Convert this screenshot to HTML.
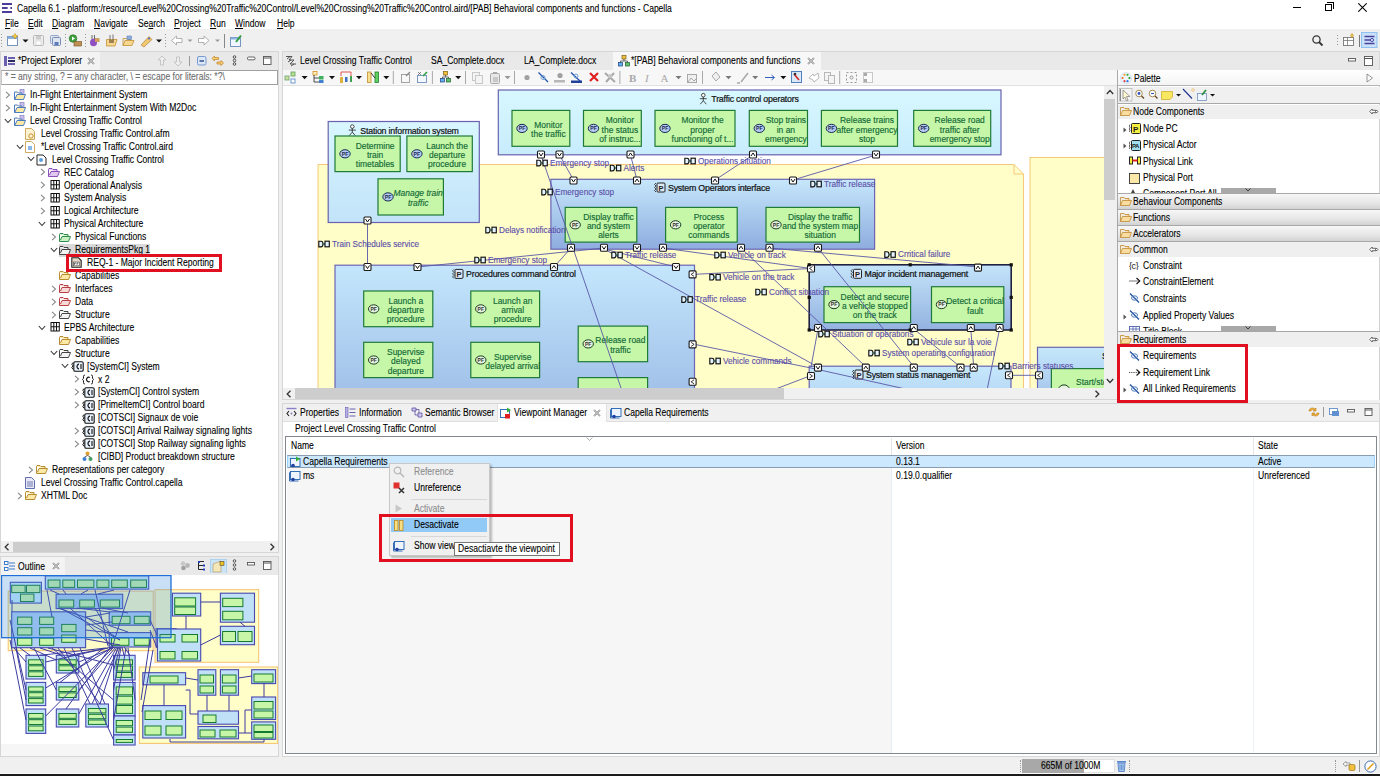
<!DOCTYPE html>
<html><head><meta charset="utf-8"><title>Capella</title>
<style>
*{box-sizing:border-box;margin:0;padding:0}
html,body{width:1380px;height:776px;overflow:hidden;background:#f0f0f0;font-family:"Liberation Sans",sans-serif;font-size:10px;letter-spacing:0px;color:#000}
.a{position:absolute}
.t{position:absolute;white-space:nowrap;line-height:12px;-webkit-text-stroke:0.1px currentColor;transform-origin:0 0;transform:scaleX(0.855)}
.ico{position:absolute}
</style></head><body>
<!-- title bar -->
<div class="a" style="left:0;top:0;width:1380px;height:29px;background:#fff"></div>
<svg class="a" style="left:2px;top:3px" width="12" height="10" viewBox="0 0 12 10"><rect x="0" y="0" width="10" height="2" fill="#4a3f9a"/><rect x="0" y="4" width="10" height="2" fill="#4a3f9a"/><rect x="0" y="8" width="10" height="2" fill="#4a3f9a"/><circle cx="7" cy="5" r="1.5" fill="#fff"/></svg>
<div class="t" style="left:17px;top:3.3px;letter-spacing:-0.03px">Capella 6.1 - platform:/resource/Level%20Crossing%20Traffic%20Control/Level%20Crossing%20Traffic%20Control.aird/[PAB] Behavioral components and functions - Capella</div>
<!-- window controls -->
<div class="a" style="left:1292.5px;top:7px;width:8.5px;height:1px;background:#000"></div>
<div class="a" style="left:1325px;top:4px;width:7px;height:7px;border:1px solid #000;background:#fff"></div>
<div class="a" style="left:1327px;top:2px;width:7px;height:7px;border-top:1px solid #000;border-right:1px solid #000"></div>
<svg class="a" style="left:1357.5px;top:3px" width="9" height="9" viewBox="0 0 9 9"><path d="M0.3 0.3L8.7 8.7M8.7 0.3L0.3 8.7" stroke="#000" stroke-width="1.05"/></svg>
<!-- menu -->
<div class="t" style="left:5px;top:18px"><u>F</u>ile</div>
<div class="t" style="left:28px;top:18px"><u>E</u>dit</div>
<div class="t" style="left:52px;top:18px"><u>D</u>iagram</div>
<div class="t" style="left:94px;top:18px"><u>N</u>avigate</div>
<div class="t" style="left:138px;top:18px">Se<u>a</u>rch</div>
<div class="t" style="left:174px;top:18px"><u>P</u>roject</div>
<div class="t" style="left:210px;top:18px"><u>R</u>un</div>
<div class="t" style="left:235px;top:18px"><u>W</u>indow</div>
<div class="t" style="left:277px;top:18px"><u>H</u>elp</div>
<!-- main toolbar -->
<div class="a" style="left:0;top:29px;width:1380px;height:22px;background:#f0f0f0"></div>
<svg class="a" style="left:0;top:29px" width="260" height="22" viewBox="0 29 260 22">
<path d="M1.5 34V48" stroke="#999" stroke-width="1" stroke-dasharray="1 2"/>
<rect x="7.5" y="36.5" width="10" height="9" fill="#fff" stroke="#6a8ab8" stroke-width="0.9"/><rect x="7.5" y="36.5" width="10" height="2.5" fill="#8ab0e0"/><path d="M15 33.5L16 35.5L18 36L16 37L15 39L14 37L12 36L14 35.5Z" fill="#f8d040" stroke="#b08010" stroke-width="0.5"/>
<path d="M22.5 39.5H28.5L25.5 42.5Z" fill="#111"/>
<rect x="33.5" y="35.5" width="10" height="10" rx="1" fill="#eee" stroke="#b8b8b8"/><rect x="36" y="36" width="5" height="3.5" fill="#ccc"/><rect x="36" y="41" width="5" height="4" fill="#fff" stroke="#c8c8c8" stroke-width="0.5"/>
<rect x="50.5" y="35.5" width="8" height="8" rx="1" fill="#dde4f0" stroke="#98a8c8"/><rect x="52.5" y="37.5" width="8" height="8" rx="1" fill="#dde4f0" stroke="#7890b8"/><rect x="54.5" y="42" width="4" height="3" fill="#5a7ab8"/>
<path d="M65.5 34V48" stroke="#999" stroke-width="1" stroke-dasharray="1 2"/>
<circle cx="73" cy="38.5" r="3.8" fill="#40a040" stroke="#207020" stroke-width="0.6"/><path d="M72 36.5L75 38.5L72 40.5Z" fill="#fff"/><rect x="74" y="41.5" width="7.5" height="4.5" fill="#c09050" stroke="#705020" stroke-width="0.6"/>
<path d="M85.5 34V48" stroke="#999" stroke-width="1" stroke-dasharray="1 2"/>
<ellipse cx="93.5" cy="42.5" rx="3.5" ry="3.8" fill="#9050c0"/><path d="M92 35V39M94.5 35V39" stroke="#444" stroke-width="0.8"/><rect x="95" y="38" width="4.5" height="4" fill="#d0a060"/>
<path d="M106.5 39.5H117L115 46H106.5Z" fill="#f8d890" stroke="#c09030" stroke-width="0.8"/><path d="M110 35V40M113 34.5V40" stroke="#555" stroke-width="0.8"/><rect x="109" y="40" width="5" height="3" fill="#a08050"/>
<path d="M123 38.5V45.5H132L134 40.5H125L123 45.5M123 38.5H126.5L127.5 39.5H131V40.5" fill="#f8d890" stroke="#c09030" stroke-width="0.8"/><rect x="127" y="36" width="4.5" height="3.5" fill="#8ab0e0" stroke="#5070b0" stroke-width="0.5"/>
<path d="M141 45L149 36.5L152 39.5L144 47Z" fill="#f0c870" stroke="#b08040" stroke-width="0.7"/><circle cx="149" cy="38.5" r="1" fill="#4060c0"/>
<path d="M156 39.5H162L159 42.5Z" fill="#111"/>
<path d="M165.5 34V48" stroke="#999" stroke-width="1" stroke-dasharray="1 2"/>
<path d="M171.5 40.5L176.5 36V38.5H182V42.5H176.5V45Z" fill="#fff" stroke="#a8a8a8" stroke-width="0.9"/>
<path d="M187.5 39.5H192.5L190 42Z" fill="#999"/>
<path d="M209 40.5L204 36V38.5H198.5V42.5H204V45Z" fill="#fff" stroke="#a8a8a8" stroke-width="0.9"/>
<path d="M215 39.5H220L217.5 42Z" fill="#999"/>
<path d="M224.5 34V48" stroke="#888" stroke-width="1"/>
<rect x="230.5" y="37.5" width="10" height="9" fill="#f0f6ff" stroke="#6a8ab8" stroke-width="0.9"/><rect x="230.5" y="37.5" width="10" height="2" fill="#8ab0e0"/><path d="M236 42L241 35.5" stroke="#30a040" stroke-width="2"/>
</svg>
<svg class="a" style="left:1305px;top:29px" width="75" height="22" viewBox="1305 29 75 22">
<circle cx="1316.5" cy="39.5" r="3.6" fill="none" stroke="#333" stroke-width="1.3"/><path d="M1319 42L1322.5 45.5" stroke="#333" stroke-width="1.8"/>
<path d="M1337.5 35V47" stroke="#999" stroke-width="1" stroke-dasharray="1 2"/>
<rect x="1343.5" y="37.5" width="10" height="8" fill="#fff" stroke="#777" stroke-width="0.9"/><path d="M1343.5 40.5H1353.5M1347.5 37.5V45.5" stroke="#777" stroke-width="0.8"/><path d="M1352 33.5L1353.5 35.5L1352 37.5L1350.5 35.5Z" fill="#f0c040" stroke="#b08010" stroke-width="0.5"/>
<path d="M1359.5 35V47" stroke="#777" stroke-width="1"/>
<rect x="1361.5" y="32.5" width="15.5" height="15" fill="#c8e0f8" stroke="#90c0f0" stroke-width="1"/>
<path d="M1364.5 36.5H1374.5M1364.5 40H1370.5M1364.5 43.5H1374.5" stroke="#4a40a0" stroke-width="1.6"/><circle cx="1372" cy="40" r="1.6" fill="none" stroke="#4a40a0" stroke-width="0.9"/>
</svg>
<!-- project explorer -->
<div class="a" style="left:0;top:51px;width:279px;height:502px;background:#fff;border:1px solid #d6d6d6"></div>
<div class="a" style="left:1px;top:52px;width:277px;height:18px;background:#e9e9e9"></div>
<div class="a" style="left:1px;top:52px;width:99px;height:18px;background:#f3f3f3"></div>
<svg class="a" style="left:4px;top:56px" width="11" height="10" viewBox="0 0 11 10"><rect x="0" y="0" width="3" height="10" fill="#6a60b0"/><rect x="4" y="1" width="7" height="2" fill="#6a60b0"/><rect x="4" y="4" width="7" height="2" fill="#2a2a60"/><rect x="4" y="7" width="7" height="2" fill="#6a60b0"/></svg>
<div class="t" style="left:18px;top:55px">*Project Explorer</div>
<svg class="a" style="left:87px;top:57px" width="8" height="8" viewBox="0 0 8 8"><path d="M1 1L7 7M7 1L1 7" stroke="#777" stroke-width="1.6"/><path d="M1 1L7 7M7 1L1 7" stroke="#fff" stroke-width="0.5"/></svg>
<svg class="a" style="left:157px;top:55px" width="120" height="12" viewBox="0 0 120 12"><path d="M5 1L1 5H3.5V10H6.5V5H9Z" fill="#eee" stroke="#bbb" stroke-width="0.8"/><path d="M21 11L17 7H19.5V2H22.5V7H25Z" fill="#eee" stroke="#bbb" stroke-width="0.8"/><path d="M32.5 1V11" stroke="#999" stroke-width="1"/><rect x="40.5" y="1.5" width="8.5" height="8.5" rx="1.5" fill="#dce8f8" stroke="#6a90d0" stroke-width="0.9"/><path d="M42.5 6H47" stroke="#1a3a80" stroke-width="1.3"/><path d="M55 3.5L57.5 1V2.5H61.5V4.5H57.5V6Z" fill="#f8d070" stroke="#c08020" stroke-width="0.7"/><path d="M66.5 8L64 5.5V7H60V9H64V10.5Z" fill="#f8d070" stroke="#c08020" stroke-width="0.7"/><circle cx="77.5" cy="2" r="1.3" fill="none" stroke="#333" stroke-width="0.8"/><circle cx="77.5" cy="5.5" r="1.3" fill="none" stroke="#333" stroke-width="0.8"/><circle cx="77.5" cy="9" r="1.3" fill="none" stroke="#333" stroke-width="0.8"/><rect x="90.5" y="2" width="7.5" height="2.8" rx="1" fill="#fff" stroke="#555" stroke-width="0.9"/><rect x="106.5" y="1.5" width="7.5" height="8" fill="#fff" stroke="#555" stroke-width="0.9"/><path d="M106.5 3H114" stroke="#555"/></svg>
<div class="a" style="left:1px;top:69.5px;width:277px;height:15.5px;background:#fff;border:1px solid #a0a0a0;border-left-color:#c8c8c8"></div>
<div class="t" style="left:4.5px;top:71.3px;color:#6d6d6d">* = any string, ? = any character, \ = escape for literals: *?\</div>
<svg class="a" style="left:5.4px;top:90.8px" width="6" height="8" viewBox="0 0 6 8"><path d="M1 0.8L4.5 4L1 7.2" fill="none" stroke="#8a8a8a" stroke-width="1.1"/></svg>
<div class="ico" style="left:13.7px;top:89.3px;line-height:0"><svg width="12" height="11" viewBox="0 0 12 11"><rect x="6" y="0.5" width="4" height="6" fill="#c8c0ee" stroke="#8a7fc0" stroke-width="0.7"/><path d="M0.5 3 L0.5 10.5 L9.5 10.5 L11.5 5.5 L3 5.5 L1 10 M0.5 3 L3.5 3 L4.5 4 L8 4 L8 5.5" fill="#fde9a6" stroke="#3a6fc0" stroke-width="0.9"/></svg></div>
<div class="t" style="left:29.7px;top:89.0px">In-Flight Entertainment System</div>
<svg class="a" style="left:5.4px;top:103.7px" width="6" height="8" viewBox="0 0 6 8"><path d="M1 0.8L4.5 4L1 7.2" fill="none" stroke="#8a8a8a" stroke-width="1.1"/></svg>
<div class="ico" style="left:13.7px;top:102.2px;line-height:0"><svg width="12" height="11" viewBox="0 0 12 11"><rect x="6" y="0.5" width="4" height="6" fill="#c8c0ee" stroke="#8a7fc0" stroke-width="0.7"/><path d="M0.5 3 L0.5 10.5 L9.5 10.5 L11.5 5.5 L3 5.5 L1 10 M0.5 3 L3.5 3 L4.5 4 L8 4 L8 5.5" fill="#fde9a6" stroke="#3a6fc0" stroke-width="0.9"/></svg></div>
<div class="t" style="left:29.7px;top:101.9px">In-Flight Entertainment System With M2Doc</div>
<svg class="a" style="left:4.2px;top:117.7px" width="8" height="6" viewBox="0 0 8 6"><path d="M0.8 1L4 4.5L7.2 1" fill="none" stroke="#333" stroke-width="1.1"/></svg>
<div class="ico" style="left:13.7px;top:115.2px;line-height:0"><svg width="12" height="11" viewBox="0 0 12 11"><rect x="6" y="0.5" width="4" height="6" fill="#c8c0ee" stroke="#8a7fc0" stroke-width="0.7"/><path d="M0.5 3 L0.5 10.5 L9.5 10.5 L11.5 5.5 L3 5.5 L1 10 M0.5 3 L3.5 3 L4.5 4 L8 4 L8 5.5" fill="#fde9a6" stroke="#3a6fc0" stroke-width="0.9"/></svg></div>
<div class="t" style="left:29.7px;top:114.9px">Level Crossing Traffic Control</div>
<div class="ico" style="left:25.0px;top:128.1px;line-height:0"><svg width="10" height="12" viewBox="0 0 10 12"><path d="M0.5 0.5 L6.5 0.5 L9.5 3.5 L9.5 11.5 L0.5 11.5 Z" fill="#fdf3d0" stroke="#c8a050" stroke-width="0.9"/><circle cx="6" cy="8" r="2.2" fill="none" stroke="#c89030" stroke-width="1"/></svg></div>
<div class="t" style="left:41.0px;top:127.8px">Level Crossing Traffic Control.afm</div>
<svg class="a" style="left:15.5px;top:143.5px" width="8" height="6" viewBox="0 0 8 6"><path d="M0.8 1L4 4.5L7.2 1" fill="none" stroke="#333" stroke-width="1.1"/></svg>
<div class="ico" style="left:25.0px;top:141.0px;line-height:0"><svg width="10" height="12" viewBox="0 0 10 12"><path d="M0.5 0.5 L6.5 0.5 L9.5 3.5 L9.5 11.5 L0.5 11.5 Z" fill="#fff" stroke="#c8a050" stroke-width="0.9"/><rect x="3" y="5" width="4" height="4" fill="#8ab8e8"/></svg></div>
<div class="t" style="left:41.0px;top:140.7px">*Level Crossing Traffic Control.aird</div>
<svg class="a" style="left:26.9px;top:156.4px" width="8" height="6" viewBox="0 0 8 6"><path d="M0.8 1L4 4.5L7.2 1" fill="none" stroke="#333" stroke-width="1.1"/></svg>
<div class="ico" style="left:36.4px;top:153.9px;line-height:0"><svg width="11" height="12" viewBox="0 0 11 12"><path d="M1 1 L7 1 L10 4 L10 11 L1 11 Z" fill="#fff" stroke="#222" stroke-width="1"/><circle cx="5" cy="6" r="2" fill="#5aa0e0"/></svg></div>
<div class="t" style="left:52.4px;top:153.6px">Level Crossing Traffic Control</div>
<svg class="a" style="left:39.5px;top:168.4px" width="6" height="8" viewBox="0 0 6 8"><path d="M1 0.8L4.5 4L1 7.2" fill="none" stroke="#8a8a8a" stroke-width="1.1"/></svg>
<div class="ico" style="left:47.8px;top:166.9px;line-height:0"><svg width="12" height="10" viewBox="0 0 12 10"><path d="M0.5 2.5 L0.5 9.5 L9.5 9.5 L11.5 4.5 L3 4.5 L1.5 8 M0.5 2.5 L1 1.5 L4 1.5 L5 2.5 L9 2.5 L9 4.5" fill="#e0c8f0" stroke="#8040b0" stroke-width="0.9"/></svg></div>
<div class="t" style="left:63.8px;top:166.6px">REC Catalog</div>
<svg class="a" style="left:39.5px;top:181.3px" width="6" height="8" viewBox="0 0 6 8"><path d="M1 0.8L4.5 4L1 7.2" fill="none" stroke="#8a8a8a" stroke-width="1.1"/></svg>
<div class="ico" style="left:47.8px;top:179.8px;line-height:0"><svg width="12" height="10" viewBox="0 0 12 10"><rect x="3" y="0.5" width="8.3" height="8.5" fill="none" stroke="#111" stroke-width="1"/><path d="M5.8 0.5V9M8.5 0.5V9M3 4.75H11.3" stroke="#111" stroke-width="1"/></svg></div>
<div class="t" style="left:63.8px;top:179.5px">Operational Analysis</div>
<svg class="a" style="left:39.5px;top:194.2px" width="6" height="8" viewBox="0 0 6 8"><path d="M1 0.8L4.5 4L1 7.2" fill="none" stroke="#8a8a8a" stroke-width="1.1"/></svg>
<div class="ico" style="left:47.8px;top:192.7px;line-height:0"><svg width="12" height="10" viewBox="0 0 12 10"><rect x="3" y="0.5" width="8.3" height="8.5" fill="none" stroke="#111" stroke-width="1"/><path d="M5.8 0.5V9M8.5 0.5V9M3 4.75H11.3" stroke="#111" stroke-width="1"/></svg></div>
<div class="t" style="left:63.8px;top:192.4px">System Analysis</div>
<svg class="a" style="left:39.5px;top:207.2px" width="6" height="8" viewBox="0 0 6 8"><path d="M1 0.8L4.5 4L1 7.2" fill="none" stroke="#8a8a8a" stroke-width="1.1"/></svg>
<div class="ico" style="left:47.8px;top:205.7px;line-height:0"><svg width="12" height="10" viewBox="0 0 12 10"><rect x="3" y="0.5" width="8.3" height="8.5" fill="none" stroke="#111" stroke-width="1"/><path d="M5.8 0.5V9M8.5 0.5V9M3 4.75H11.3" stroke="#111" stroke-width="1"/></svg></div>
<div class="t" style="left:63.8px;top:205.4px">Logical Architecture</div>
<svg class="a" style="left:38.3px;top:221.1px" width="8" height="6" viewBox="0 0 8 6"><path d="M0.8 1L4 4.5L7.2 1" fill="none" stroke="#333" stroke-width="1.1"/></svg>
<div class="ico" style="left:47.8px;top:218.6px;line-height:0"><svg width="12" height="10" viewBox="0 0 12 10"><rect x="3" y="0.5" width="8.3" height="8.5" fill="none" stroke="#111" stroke-width="1"/><path d="M5.8 0.5V9M8.5 0.5V9M3 4.75H11.3" stroke="#111" stroke-width="1"/></svg></div>
<div class="t" style="left:63.8px;top:218.3px">Physical Architecture</div>
<svg class="a" style="left:51.0px;top:233.0px" width="6" height="8" viewBox="0 0 6 8"><path d="M1 0.8L4.5 4L1 7.2" fill="none" stroke="#8a8a8a" stroke-width="1.1"/></svg>
<div class="ico" style="left:59.3px;top:231.5px;line-height:0"><svg width="12" height="10" viewBox="0 0 12 10"><path d="M0.5 2.5 L0.5 9.5 L9.5 9.5 L11.5 4.5 L3 4.5 L1.5 8 M0.5 2.5 L1 1.5 L4 1.5 L5 2.5 L9 2.5 L9 4.5" fill="#c8f0c0" stroke="#208040" stroke-width="0.9"/></svg></div>
<div class="t" style="left:75.3px;top:231.2px">Physical Functions</div>
<div class="a" style="left:59px;top:243.5px;width:91px;height:13px;background:#d9d9d9"></div>
<svg class="a" style="left:49.8px;top:247.0px" width="8" height="6" viewBox="0 0 8 6"><path d="M0.8 1L4 4.5L7.2 1" fill="none" stroke="#333" stroke-width="1.1"/></svg>
<div class="ico" style="left:59.3px;top:244.5px;line-height:0"><svg width="12" height="10" viewBox="0 0 12 10"><path d="M0.5 2.5 L0.5 9.5 L9.5 9.5 L11.5 4.5 L3 4.5 L1.5 8 M0.5 2.5 L1 1.5 L4 1.5 L5 2.5 L9 2.5 L9 4.5" fill="#f4f4f4" stroke="#303030" stroke-width="0.9"/></svg></div>
<div class="t" style="left:75.3px;top:244.2px">RequirementsPkg 1</div>
<div class="ico" style="left:70.9px;top:257.4px;line-height:0"><svg width="11" height="11" viewBox="0 0 11 11"><path d="M0.8 0.8H7.5L10.2 3.5V10.2H0.8Z" fill="#e8d8c8" stroke="#222" stroke-width="1.1"/><rect x="2.5" y="5" width="6" height="3.8" fill="#fff" stroke="#444" stroke-width="0.6"/><path d="M3.5 7.8V6H5M6 7.8V6H7.5" stroke="#222" stroke-width="0.7" fill="none"/></svg></div>
<div class="t" style="left:86.9px;top:257.1px">REQ-1 - Major Incident Reporting</div>
<div class="ico" style="left:59.3px;top:270.3px;line-height:0"><svg width="12" height="10" viewBox="0 0 12 10"><path d="M0.5 2.5 L0.5 9.5 L9.5 9.5 L11.5 4.5 L3 4.5 L1.5 8 M0.5 2.5 L1 1.5 L4 1.5 L5 2.5 L9 2.5 L9 4.5" fill="#fde9a6" stroke="#b08020" stroke-width="0.9"/></svg></div>
<div class="t" style="left:75.3px;top:270.0px">Capabilities</div>
<svg class="a" style="left:51.0px;top:284.8px" width="6" height="8" viewBox="0 0 6 8"><path d="M1 0.8L4.5 4L1 7.2" fill="none" stroke="#8a8a8a" stroke-width="1.1"/></svg>
<div class="ico" style="left:59.3px;top:283.2px;line-height:0"><svg width="12" height="10" viewBox="0 0 12 10"><path d="M0.5 2.5 L0.5 9.5 L9.5 9.5 L11.5 4.5 L3 4.5 L1.5 8 M0.5 2.5 L1 1.5 L4 1.5 L5 2.5 L9 2.5 L9 4.5" fill="#f8d8d8" stroke="#b03030" stroke-width="0.9"/></svg></div>
<div class="t" style="left:75.3px;top:282.9px">Interfaces</div>
<svg class="a" style="left:51.0px;top:297.7px" width="6" height="8" viewBox="0 0 6 8"><path d="M1 0.8L4.5 4L1 7.2" fill="none" stroke="#8a8a8a" stroke-width="1.1"/></svg>
<div class="ico" style="left:59.3px;top:296.2px;line-height:0"><svg width="12" height="10" viewBox="0 0 12 10"><path d="M0.5 2.5 L0.5 9.5 L9.5 9.5 L11.5 4.5 L3 4.5 L1.5 8 M0.5 2.5 L1 1.5 L4 1.5 L5 2.5 L9 2.5 L9 4.5" fill="#f8d8d8" stroke="#b03030" stroke-width="0.9"/></svg></div>
<div class="t" style="left:75.3px;top:295.9px">Data</div>
<svg class="a" style="left:51.0px;top:310.6px" width="6" height="8" viewBox="0 0 6 8"><path d="M1 0.8L4.5 4L1 7.2" fill="none" stroke="#8a8a8a" stroke-width="1.1"/></svg>
<div class="ico" style="left:59.3px;top:309.1px;line-height:0"><svg width="12" height="10" viewBox="0 0 12 10"><path d="M0.5 2.5 L0.5 9.5 L9.5 9.5 L11.5 4.5 L3 4.5 L1.5 8 M0.5 2.5 L1 1.5 L4 1.5 L5 2.5 L9 2.5 L9 4.5" fill="#f4f4f4" stroke="#303030" stroke-width="0.9"/></svg></div>
<div class="t" style="left:75.3px;top:308.8px">Structure</div>
<svg class="a" style="left:38.3px;top:324.5px" width="8" height="6" viewBox="0 0 8 6"><path d="M0.8 1L4 4.5L7.2 1" fill="none" stroke="#333" stroke-width="1.1"/></svg>
<div class="ico" style="left:47.8px;top:322.0px;line-height:0"><svg width="12" height="10" viewBox="0 0 12 10"><rect x="3" y="0.5" width="8.3" height="8.5" fill="none" stroke="#111" stroke-width="1"/><path d="M5.8 0.5V9M8.5 0.5V9M3 4.75H11.3" stroke="#111" stroke-width="1"/></svg></div>
<div class="t" style="left:63.8px;top:321.7px">EPBS Architecture</div>
<div class="ico" style="left:59.3px;top:335.0px;line-height:0"><svg width="12" height="10" viewBox="0 0 12 10"><path d="M0.5 2.5 L0.5 9.5 L9.5 9.5 L11.5 4.5 L3 4.5 L1.5 8 M0.5 2.5 L1 1.5 L4 1.5 L5 2.5 L9 2.5 L9 4.5" fill="#fde9a6" stroke="#b08020" stroke-width="0.9"/></svg></div>
<div class="t" style="left:75.3px;top:334.7px">Capabilities</div>
<svg class="a" style="left:49.8px;top:350.4px" width="8" height="6" viewBox="0 0 8 6"><path d="M0.8 1L4 4.5L7.2 1" fill="none" stroke="#333" stroke-width="1.1"/></svg>
<div class="ico" style="left:59.3px;top:347.9px;line-height:0"><svg width="12" height="10" viewBox="0 0 12 10"><path d="M0.5 2.5 L0.5 9.5 L9.5 9.5 L11.5 4.5 L3 4.5 L1.5 8 M0.5 2.5 L1 1.5 L4 1.5 L5 2.5 L9 2.5 L9 4.5" fill="#f4f4f4" stroke="#303030" stroke-width="0.9"/></svg></div>
<div class="t" style="left:75.3px;top:347.6px">Structure</div>
<svg class="a" style="left:61.4px;top:363.3px" width="8" height="6" viewBox="0 0 8 6"><path d="M0.8 1L4 4.5L7.2 1" fill="none" stroke="#333" stroke-width="1.1"/></svg>
<div class="ico" style="left:70.9px;top:360.8px;line-height:0"><svg width="13" height="11" viewBox="0 0 13 11"><path d="M2 1.5L0.8 3.2L2 4.9L0.8 6.6L2 8.3" fill="none" stroke="#111" stroke-width="1"/><rect x="2.8" y="0.8" width="9.4" height="9.4" rx="1.3" fill="#e8f2fc" stroke="#111" stroke-width="1.1"/><path d="M8 3.2A2 2.3 0 1 0 8 7.8" fill="none" stroke="#111" stroke-width="1.2"/><path d="M10 3V8" stroke="#111" stroke-width="1.1"/></svg></div>
<div class="t" style="left:86.9px;top:360.5px">[SystemCI] System</div>
<svg class="a" style="left:73.9px;top:375.3px" width="6" height="8" viewBox="0 0 6 8"><path d="M1 0.8L4.5 4L1 7.2" fill="none" stroke="#8a8a8a" stroke-width="1.1"/></svg>
<div class="ico" style="left:82.2px;top:373.8px;line-height:0"><svg width="12" height="11" viewBox="0 0 12 11"><path d="M2.8 1Q1.5 1 1.5 2.5V4.3L0.5 5.5L1.5 6.7V8.5Q1.5 10 2.8 10M9.2 1Q10.5 1 10.5 2.5V4.3L11.5 5.5L10.5 6.7V8.5Q10.5 10 9.2 10" fill="none" stroke="#111" stroke-width="1"/><path d="M7.8 3.6A2.2 2.2 0 1 0 7.8 7.4" fill="none" stroke="#111" stroke-width="1.2"/></svg></div>
<div class="t" style="left:98.2px;top:373.5px">x 2</div>
<svg class="a" style="left:73.9px;top:388.2px" width="6" height="8" viewBox="0 0 6 8"><path d="M1 0.8L4.5 4L1 7.2" fill="none" stroke="#8a8a8a" stroke-width="1.1"/></svg>
<div class="ico" style="left:82.2px;top:386.7px;line-height:0"><svg width="13" height="11" viewBox="0 0 13 11"><path d="M2 1.5L0.8 3.2L2 4.9L0.8 6.6L2 8.3" fill="none" stroke="#111" stroke-width="1"/><rect x="2.8" y="0.8" width="9.4" height="9.4" rx="1.3" fill="#e8f2fc" stroke="#111" stroke-width="1.1"/><path d="M8 3.2A2 2.3 0 1 0 8 7.8" fill="none" stroke="#111" stroke-width="1.2"/><path d="M10 3V8" stroke="#111" stroke-width="1.1"/></svg></div>
<div class="t" style="left:98.2px;top:386.4px">[SystemCI] Control system</div>
<svg class="a" style="left:73.9px;top:401.1px" width="6" height="8" viewBox="0 0 6 8"><path d="M1 0.8L4.5 4L1 7.2" fill="none" stroke="#8a8a8a" stroke-width="1.1"/></svg>
<div class="ico" style="left:82.2px;top:399.6px;line-height:0"><svg width="13" height="11" viewBox="0 0 13 11"><path d="M2 1.5L0.8 3.2L2 4.9L0.8 6.6L2 8.3" fill="none" stroke="#111" stroke-width="1"/><rect x="2.8" y="0.8" width="9.4" height="9.4" rx="1.3" fill="#e8f2fc" stroke="#111" stroke-width="1.1"/><path d="M8 3.2A2 2.3 0 1 0 8 7.8" fill="none" stroke="#111" stroke-width="1.2"/><path d="M10 3V8" stroke="#111" stroke-width="1.1"/></svg></div>
<div class="t" style="left:98.2px;top:399.3px">[PrimeItemCI] Control board</div>
<div class="ico" style="left:82.2px;top:412.6px;line-height:0"><svg width="13" height="11" viewBox="0 0 13 11"><path d="M2 1.5L0.8 3.2L2 4.9L0.8 6.6L2 8.3" fill="none" stroke="#111" stroke-width="1"/><rect x="2.8" y="0.8" width="9.4" height="9.4" rx="1.3" fill="#e8f2fc" stroke="#111" stroke-width="1.1"/><path d="M8 3.2A2 2.3 0 1 0 8 7.8" fill="none" stroke="#111" stroke-width="1.2"/><path d="M10 3V8" stroke="#111" stroke-width="1.1"/></svg></div>
<div class="t" style="left:98.2px;top:412.2px">[COTSCI] Signaux de voie</div>
<svg class="a" style="left:73.9px;top:427.0px" width="6" height="8" viewBox="0 0 6 8"><path d="M1 0.8L4.5 4L1 7.2" fill="none" stroke="#8a8a8a" stroke-width="1.1"/></svg>
<div class="ico" style="left:82.2px;top:425.5px;line-height:0"><svg width="13" height="11" viewBox="0 0 13 11"><path d="M2 1.5L0.8 3.2L2 4.9L0.8 6.6L2 8.3" fill="none" stroke="#111" stroke-width="1"/><rect x="2.8" y="0.8" width="9.4" height="9.4" rx="1.3" fill="#e8f2fc" stroke="#111" stroke-width="1.1"/><path d="M8 3.2A2 2.3 0 1 0 8 7.8" fill="none" stroke="#111" stroke-width="1.2"/><path d="M10 3V8" stroke="#111" stroke-width="1.1"/></svg></div>
<div class="t" style="left:98.2px;top:425.2px">[COTSCI] Arrival Railway signaling lights</div>
<svg class="a" style="left:73.9px;top:439.9px" width="6" height="8" viewBox="0 0 6 8"><path d="M1 0.8L4.5 4L1 7.2" fill="none" stroke="#8a8a8a" stroke-width="1.1"/></svg>
<div class="ico" style="left:82.2px;top:438.4px;line-height:0"><svg width="13" height="11" viewBox="0 0 13 11"><path d="M2 1.5L0.8 3.2L2 4.9L0.8 6.6L2 8.3" fill="none" stroke="#111" stroke-width="1"/><rect x="2.8" y="0.8" width="9.4" height="9.4" rx="1.3" fill="#e8f2fc" stroke="#111" stroke-width="1.1"/><path d="M8 3.2A2 2.3 0 1 0 8 7.8" fill="none" stroke="#111" stroke-width="1.2"/><path d="M10 3V8" stroke="#111" stroke-width="1.1"/></svg></div>
<div class="t" style="left:98.2px;top:438.1px">[COTSCI] Stop Railway signaling lights</div>
<div class="ico" style="left:82.2px;top:451.3px;line-height:0"><svg width="11" height="11" viewBox="0 0 11 11"><circle cx="5.5" cy="2.5" r="2" fill="#e0a030"/><circle cx="2.5" cy="8" r="2" fill="#4080d0"/><circle cx="8.5" cy="8" r="2" fill="#40a060"/><path d="M5.5 4.5L2.5 6M5.5 4.5L8.5 6" stroke="#333" stroke-width="0.7"/></svg></div>
<div class="t" style="left:98.2px;top:451.0px">[CIBD] Product breakdown structure</div>
<svg class="a" style="left:28.1px;top:465.8px" width="6" height="8" viewBox="0 0 6 8"><path d="M1 0.8L4.5 4L1 7.2" fill="none" stroke="#8a8a8a" stroke-width="1.1"/></svg>
<div class="ico" style="left:36.4px;top:464.3px;line-height:0"><svg width="12" height="10" viewBox="0 0 12 10"><path d="M0.5 2.5 L0.5 9.5 L9.5 9.5 L11.5 4.5 L3 4.5 L1.5 8 M0.5 2.5 L1 1.5 L4 1.5 L5 2.5 L9 2.5 L9 4.5" fill="#fde9a6" stroke="#b08020" stroke-width="0.9"/></svg></div>
<div class="t" style="left:52.4px;top:464.0px">Representations per category</div>
<div class="ico" style="left:25.0px;top:477.2px;line-height:0"><svg width="10" height="12" viewBox="0 0 10 12"><path d="M0.5 0.5 L6.5 0.5 L9.5 3.5 L9.5 11.5 L0.5 11.5 Z" fill="#e8e8f8" stroke="#5060a0" stroke-width="0.9"/><path d="M2 5H8M2 7H8M2 9H8" stroke="#5060a0" stroke-width="0.8"/></svg></div>
<div class="t" style="left:41.0px;top:476.9px">Level Crossing Traffic Control.capella</div>
<svg class="a" style="left:16.7px;top:491.6px" width="6" height="8" viewBox="0 0 6 8"><path d="M1 0.8L4.5 4L1 7.2" fill="none" stroke="#8a8a8a" stroke-width="1.1"/></svg>
<div class="ico" style="left:25.0px;top:490.1px;line-height:0"><svg width="12" height="10" viewBox="0 0 12 10"><path d="M0.5 2.5 L0.5 9.5 L9.5 9.5 L11.5 4.5 L3 4.5 L1.5 8 M0.5 2.5 L1 1.5 L4 1.5 L5 2.5 L9 2.5 L9 4.5" fill="#fde9a6" stroke="#b08020" stroke-width="0.9"/></svg></div>
<div class="t" style="left:41.0px;top:489.8px">XHTML Doc</div>
<div class="a" style="left:66px;top:254px;width:156px;height:18px;border:3px solid #e01020"></div>
<div class="a" style="left:1px;top:541px;width:277px;height:11px;background:#f0f0f0"></div>
<div class="a" style="left:13px;top:542px;width:67px;height:10px;background:#cdcdcd"></div>
<svg class="a" style="left:4px;top:543px" width="6" height="8" viewBox="0 0 6 8"><path d="M4.5 0.8L1.2 4L4.5 7.2" fill="none" stroke="#333" stroke-width="1.3"/></svg>
<svg class="a" style="left:269px;top:543px" width="6" height="8" viewBox="0 0 6 8"><path d="M1.5 0.8L4.8 4L1.5 7.2" fill="none" stroke="#333" stroke-width="1.3"/></svg>
<!-- outline -->
<div class="a" style="left:0;top:556px;width:279px;height:201px;background:#f6f6f6;border:1px solid #d6d6d6"></div>
<div class="a" style="left:1px;top:557px;width:277px;height:17.5px;background:#e9e9e9"></div>
<div class="a" style="left:1px;top:557px;width:64px;height:17.5px;background:#f3f3f3"></div>
<svg class="a" style="left:4px;top:561px" width="11" height="10" viewBox="0 0 11 10"><rect x="0.5" y="0.5" width="3.5" height="3" fill="#fff" stroke="#2a70c8" stroke-width="0.9"/><rect x="0.5" y="6.5" width="3.5" height="3" fill="#fff" stroke="#2a70c8" stroke-width="0.9"/><path d="M5 2H11M5 5H11M5 8H11" stroke="#2a70c8" stroke-width="0.9"/></svg>
<div class="t" style="left:17.5px;top:561px">Outline</div>
<svg class="a" style="left:51.5px;top:562px" width="8" height="8" viewBox="0 0 8 8"><path d="M1 1L7 7M7 1L1 7" stroke="#777" stroke-width="1.6"/><path d="M1 1L7 7M7 1L1 7" stroke="#fff" stroke-width="0.5"/></svg>
<svg class="a" style="left:178px;top:559px" width="100" height="14" viewBox="178 559 100 14"><circle cx="183" cy="563.5" r="2.2" fill="#c8c8c8"/><circle cx="187.5" cy="565.5" r="2.4" fill="#b8b8b8"/><circle cx="183.5" cy="568" r="2.3" fill="#a0a0a0"/><path d="M198.5 561.5V569.5H204M198.5 565.5H204M198.5 561.5H204" fill="none" stroke="#111" stroke-width="0.9"/><rect x="198" y="561" width="2" height="2" fill="#2040c0"/><rect x="203" y="564.5" width="2" height="2" fill="#2040c0"/><rect x="203" y="568.5" width="2" height="2" fill="#2040c0"/><rect x="210.5" y="559.5" width="16" height="15" fill="#cce4f7" stroke="#a8d0f0" stroke-width="0.9"/><path d="M213 564L221 561V572L213 572Z" fill="#f4e8b8" stroke="#b09060" stroke-width="0.6"/><rect x="220" y="561.5" width="4" height="4" fill="#f0c020" stroke="#333" stroke-width="0.5"/><circle cx="234.5" cy="561" r="1.3" fill="none" stroke="#333" stroke-width="0.8"/><circle cx="234.5" cy="565" r="1.3" fill="none" stroke="#333" stroke-width="0.8"/><circle cx="234.5" cy="569" r="1.3" fill="none" stroke="#333" stroke-width="0.8"/><rect x="247.5" y="562.5" width="7" height="2.5" fill="#fff" stroke="#555" stroke-width="0.9"/><rect x="263.5" y="561.5" width="7.5" height="8" fill="#fff" stroke="#555" stroke-width="0.9"/><path d="M263.5 563H271" stroke="#555"/></svg>
<svg class="a" style="left:1px;top:575px" width="277" height="181" viewBox="1 575 277 181"><rect x="1" y="575" width="277" height="169" fill="#fff"/><rect x="8.2" y="591.1" width="145.0" height="59.6" fill="#fffdc8" stroke="#f5c26a" stroke-width="1"/><rect x="155.0" y="589.7" width="103.7" height="72.6" fill="#fffdc8" stroke="#f5c26a" stroke-width="1"/><rect x="139.3" y="667.0" width="138.4" height="76.4" fill="#fffdc8" stroke="#f5c26a" stroke-width="1"/><rect x="10.3" y="582.3" width="31.1" height="20.8" fill="#c8ecfc" stroke="#4848b0" stroke-width="1.1"/><rect x="11.7" y="585.3" width="13.4" height="7.3" fill="#c8f6a8" stroke="#157a30" stroke-width="1"/><rect x="26.5" y="585.3" width="13.4" height="7.3" fill="#c8f6a8" stroke="#157a30" stroke-width="1"/><rect x="20.5" y="594.1" width="13.4" height="7.4" fill="#c8f6a8" stroke="#157a30" stroke-width="1"/><rect x="45.3" y="575.8" width="103.4" height="13.3" fill="#c8ecfc" stroke="#4848b0" stroke-width="1.1"/><rect x="48.1" y="580.0" width="11.9" height="7.4" fill="#c8f6a8" stroke="#157a30" stroke-width="1"/><rect x="62.8" y="580.0" width="11.9" height="7.4" fill="#c8f6a8" stroke="#157a30" stroke-width="1"/><rect x="77.5" y="580.0" width="16.4" height="7.4" fill="#c8f6a8" stroke="#157a30" stroke-width="1"/><rect x="96.9" y="580.0" width="12.0" height="7.4" fill="#c8f6a8" stroke="#157a30" stroke-width="1"/><rect x="111.7" y="580.0" width="15.6" height="7.4" fill="#c8f6a8" stroke="#157a30" stroke-width="1"/><rect x="130.7" y="580.0" width="15.8" height="7.4" fill="#c8f6a8" stroke="#157a30" stroke-width="1"/><rect x="56.1" y="594.2" width="66.6" height="14.4" fill="#a8c8f0" stroke="#4848b0" stroke-width="1.1"/><rect x="59.0" y="600.0" width="14.7" height="7.1" fill="#c8f6a8" stroke="#157a30" stroke-width="1"/><rect x="79.7" y="600.0" width="14.7" height="7.1" fill="#c8f6a8" stroke="#157a30" stroke-width="1"/><rect x="100.3" y="600.0" width="19.2" height="7.1" fill="#c8f6a8" stroke="#157a30" stroke-width="1"/><rect x="11.7" y="611.8" width="73.9" height="35.9" fill="#b0d0f4" stroke="#4848b0" stroke-width="1.1"/><rect x="17.6" y="617.1" width="14.2" height="7.3" fill="#c8f6a8" stroke="#157a30" stroke-width="1"/><rect x="39.6" y="617.1" width="14.1" height="7.3" fill="#c8f6a8" stroke="#157a30" stroke-width="1"/><rect x="17.6" y="627.7" width="14.2" height="7.3" fill="#c8f6a8" stroke="#157a30" stroke-width="1"/><rect x="39.6" y="627.7" width="14.1" height="7.3" fill="#c8f6a8" stroke="#157a30" stroke-width="1"/><rect x="61.7" y="624.4" width="14.3" height="7.3" fill="#c8f6a8" stroke="#157a30" stroke-width="1"/><rect x="61.7" y="635.0" width="14.3" height="7.3" fill="#c8f6a8" stroke="#157a30" stroke-width="1"/><rect x="17.6" y="638.1" width="14.2" height="7.2" fill="#c8f6a8" stroke="#157a30" stroke-width="1"/><rect x="39.6" y="638.1" width="14.1" height="7.2" fill="#c8f6a8" stroke="#157a30" stroke-width="1"/><rect x="109.2" y="611.8" width="41.5" height="13.4" fill="#b0d0f4" stroke="#4848b0" stroke-width="1.1"/><rect x="112.2" y="616.3" width="17.8" height="7.4" fill="#c8f6a8" stroke="#157a30" stroke-width="1"/><rect x="134.3" y="616.3" width="14.9" height="7.4" fill="#c8f6a8" stroke="#157a30" stroke-width="1"/><rect x="109.2" y="632.6" width="41.5" height="14.4" fill="#b8d8f8" stroke="#4848b0" stroke-width="1.1"/><rect x="111.4" y="637.9" width="17.5" height="7.4" fill="#c8f6a8" stroke="#157a30" stroke-width="1"/><rect x="134.3" y="637.9" width="14.9" height="7.4" fill="#c8f6a8" stroke="#157a30" stroke-width="1"/><rect x="156.1" y="628.7" width="20.0" height="18.2" fill="#c0e0f8" stroke="#4848b0" stroke-width="1.1"/><rect x="159.0" y="633.1" width="15.1" height="7.5" fill="#c8f6a8" stroke="#157a30" stroke-width="1"/><rect x="26.0" y="655.3" width="19.7" height="23.7" fill="#c0e0f8" stroke="#4848b0" stroke-width="1.1"/><rect x="28.6" y="659.8" width="14.5" height="4.6" fill="#c8f6a8" stroke="#157a30" stroke-width="1"/><rect x="28.6" y="665.8" width="14.5" height="4.6" fill="#c8f6a8" stroke="#157a30" stroke-width="1"/><rect x="28.6" y="671.8" width="14.5" height="4.6" fill="#c8f6a8" stroke="#157a30" stroke-width="1"/><rect x="26.0" y="682.4" width="19.7" height="23.2" fill="#c0e0f8" stroke="#4848b0" stroke-width="1.1"/><rect x="28.6" y="686.9" width="14.5" height="4.4" fill="#c8f6a8" stroke="#157a30" stroke-width="1"/><rect x="28.6" y="692.7" width="14.5" height="4.4" fill="#c8f6a8" stroke="#157a30" stroke-width="1"/><rect x="28.6" y="698.6" width="14.5" height="4.4" fill="#c8f6a8" stroke="#157a30" stroke-width="1"/><rect x="26.0" y="709.0" width="19.7" height="24.4" fill="#c0e0f8" stroke="#4848b0" stroke-width="1.1"/><rect x="28.6" y="713.5" width="14.5" height="4.8" fill="#c8f6a8" stroke="#157a30" stroke-width="1"/><rect x="28.6" y="719.7" width="14.5" height="4.8" fill="#c8f6a8" stroke="#157a30" stroke-width="1"/><rect x="28.6" y="726.0" width="14.5" height="4.8" fill="#c8f6a8" stroke="#157a30" stroke-width="1"/><rect x="56.3" y="655.3" width="22.5" height="17.7" fill="#c0e0f8" stroke="#4848b0" stroke-width="1.1"/><rect x="58.9" y="659.8" width="17.3" height="4.6" fill="#c8f6a8" stroke="#157a30" stroke-width="1"/><rect x="58.9" y="665.8" width="17.3" height="4.6" fill="#c8f6a8" stroke="#157a30" stroke-width="1"/><rect x="56.3" y="682.4" width="22.5" height="17.6" fill="#c0e0f8" stroke="#4848b0" stroke-width="1.1"/><rect x="58.9" y="686.9" width="17.3" height="4.6" fill="#c8f6a8" stroke="#157a30" stroke-width="1"/><rect x="58.9" y="692.9" width="17.3" height="4.6" fill="#c8f6a8" stroke="#157a30" stroke-width="1"/><rect x="56.3" y="709.0" width="22.5" height="18.0" fill="#c0e0f8" stroke="#4848b0" stroke-width="1.1"/><rect x="58.9" y="713.5" width="17.3" height="4.8" fill="#c8f6a8" stroke="#157a30" stroke-width="1"/><rect x="58.9" y="719.6" width="17.3" height="4.8" fill="#c8f6a8" stroke="#157a30" stroke-width="1"/><rect x="85.8" y="704.0" width="22.7" height="23.0" fill="#c0e0f8" stroke="#4848b0" stroke-width="1.1"/><rect x="88.4" y="708.5" width="17.5" height="4.4" fill="#c8f6a8" stroke="#157a30" stroke-width="1"/><rect x="88.4" y="714.3" width="17.5" height="4.4" fill="#c8f6a8" stroke="#157a30" stroke-width="1"/><rect x="88.4" y="720.0" width="17.5" height="4.4" fill="#c8f6a8" stroke="#157a30" stroke-width="1"/><rect x="113.6" y="655.3" width="21.5" height="24.7" fill="#c0e0f8" stroke="#4848b0" stroke-width="1.1"/><rect x="116.2" y="659.8" width="16.3" height="4.9" fill="#c8f6a8" stroke="#157a30" stroke-width="1"/><rect x="116.2" y="666.1" width="16.3" height="4.9" fill="#c8f6a8" stroke="#157a30" stroke-width="1"/><rect x="116.2" y="672.5" width="16.3" height="4.9" fill="#c8f6a8" stroke="#157a30" stroke-width="1"/><rect x="113.6" y="682.4" width="21.5" height="33.6" fill="#c0e0f8" stroke="#4848b0" stroke-width="1.1"/><rect x="116.2" y="686.9" width="16.3" height="7.9" fill="#c8f6a8" stroke="#157a30" stroke-width="1"/><rect x="116.2" y="696.2" width="16.3" height="7.9" fill="#c8f6a8" stroke="#157a30" stroke-width="1"/><rect x="116.2" y="705.5" width="16.3" height="7.9" fill="#c8f6a8" stroke="#157a30" stroke-width="1"/><rect x="113.6" y="716.0" width="21.5" height="19.0" fill="#c0e0f8" stroke="#4848b0" stroke-width="1.1"/><rect x="116.2" y="720.5" width="16.3" height="5.2" fill="#c8f6a8" stroke="#157a30" stroke-width="1"/><rect x="116.2" y="727.1" width="16.3" height="5.2" fill="#c8f6a8" stroke="#157a30" stroke-width="1"/><rect x="113.6" y="735.0" width="21.5" height="10.0" fill="#c0e0f8" stroke="#4848b0" stroke-width="1.1"/><rect x="116.2" y="739.5" width="16.3" height="2.9" fill="#c8f6a8" stroke="#157a30" stroke-width="1"/><rect x="172.4" y="593.2" width="28.3" height="22.8" fill="#c0e0f8" stroke="#4848b0" stroke-width="1.1"/><rect x="174.7" y="597.8" width="20.9" height="8.2" fill="#c8f6a8" stroke="#157a30" stroke-width="1"/><rect x="174.7" y="607.0" width="20.9" height="7.5" fill="#c8f6a8" stroke="#157a30" stroke-width="1"/><rect x="220.4" y="593.2" width="34.1" height="29.0" fill="#c0e0f8" stroke="#4848b0" stroke-width="1.1"/><rect x="222.7" y="598.3" width="20.2" height="8.3" fill="#c8f6a8" stroke="#157a30" stroke-width="1"/><rect x="222.7" y="611.3" width="20.2" height="8.5" fill="#c8f6a8" stroke="#157a30" stroke-width="1"/><rect x="157.4" y="629.0" width="43.3" height="32.0" fill="#c0e0f8" stroke="#4848b0" stroke-width="1.1"/><rect x="160.0" y="634.5" width="15.0" height="7.5" fill="#c8f6a8" stroke="#157a30" stroke-width="1"/><rect x="182.0" y="634.5" width="15.5" height="7.5" fill="#c8f6a8" stroke="#157a30" stroke-width="1"/><rect x="160.0" y="651.5" width="15.0" height="7.5" fill="#c8f6a8" stroke="#157a30" stroke-width="1"/><rect x="182.0" y="651.5" width="15.5" height="7.5" fill="#c8f6a8" stroke="#157a30" stroke-width="1"/><rect x="220.4" y="626.3" width="34.1" height="18.4" fill="#c0e0f8" stroke="#4848b0" stroke-width="1.1"/><rect x="222.6" y="631.5" width="12.9" height="10.0" fill="#c8f6a8" stroke="#157a30" stroke-width="1"/><rect x="238.0" y="631.5" width="14.0" height="10.0" fill="#c8f6a8" stroke="#157a30" stroke-width="1"/><rect x="142.8" y="672.7" width="42.8" height="12.1" fill="#c0e0f8" stroke="#4848b0" stroke-width="1.1"/><rect x="150.0" y="676.0" width="28.0" height="7.0" fill="#c8f6a8" stroke="#157a30" stroke-width="1"/><rect x="198.0" y="669.7" width="17.8" height="25.5" fill="#c0e0f8" stroke="#4848b0" stroke-width="1.1"/><rect x="200.0" y="675.0" width="13.5" height="8.0" fill="#c8f6a8" stroke="#157a30" stroke-width="1"/><rect x="200.0" y="686.0" width="13.5" height="7.0" fill="#c8f6a8" stroke="#157a30" stroke-width="1"/><rect x="220.4" y="669.7" width="18.1" height="25.5" fill="#c0e0f8" stroke="#4848b0" stroke-width="1.1"/><rect x="222.4" y="675.0" width="13.6" height="8.0" fill="#c8f6a8" stroke="#157a30" stroke-width="1"/><rect x="222.4" y="686.0" width="13.6" height="7.0" fill="#c8f6a8" stroke="#157a30" stroke-width="1"/><rect x="251.7" y="669.7" width="23.9" height="13.9" fill="#c0e0f8" stroke="#4848b0" stroke-width="1.1"/><rect x="254.0" y="674.0" width="19.0" height="8.0" fill="#c8f6a8" stroke="#157a30" stroke-width="1"/><rect x="142.8" y="705.6" width="42.8" height="32.4" fill="#c0e0f8" stroke="#4848b0" stroke-width="1.1"/><rect x="145.0" y="711.0" width="16.0" height="8.5" fill="#c8f6a8" stroke="#157a30" stroke-width="1"/><rect x="166.0" y="711.0" width="16.0" height="8.5" fill="#c8f6a8" stroke="#157a30" stroke-width="1"/><rect x="145.0" y="726.0" width="16.0" height="9.0" fill="#c8f6a8" stroke="#157a30" stroke-width="1"/><rect x="166.0" y="726.0" width="16.0" height="9.0" fill="#c8f6a8" stroke="#157a30" stroke-width="1"/><rect x="198.0" y="711.0" width="40.5" height="13.2" fill="#c0e0f8" stroke="#4848b0" stroke-width="1.1"/><rect x="203.0" y="715.0" width="13.0" height="7.5" fill="#c8f6a8" stroke="#157a30" stroke-width="1"/><rect x="198.0" y="726.5" width="40.5" height="12.3" fill="#c0e0f8" stroke="#4848b0" stroke-width="1.1"/><rect x="200.0" y="730.0" width="15.0" height="7.0" fill="#c8f6a8" stroke="#157a30" stroke-width="1"/><rect x="220.0" y="730.0" width="16.0" height="7.0" fill="#c8f6a8" stroke="#157a30" stroke-width="1"/><rect x="251.7" y="697.0" width="23.9" height="22.5" fill="#c0e0f8" stroke="#4848b0" stroke-width="1.1"/><rect x="254.0" y="701.5" width="19.0" height="7.5" fill="#c8f6a8" stroke="#157a30" stroke-width="1"/><rect x="254.0" y="711.0" width="19.0" height="7.0" fill="#c8f6a8" stroke="#157a30" stroke-width="1"/><rect x="251.7" y="721.9" width="23.9" height="17.4" fill="#c0e0f8" stroke="#4848b0" stroke-width="1.1"/><rect x="254.0" y="725.0" width="19.0" height="6.5" fill="#c8f6a8" stroke="#157a30" stroke-width="1"/><rect x="254.0" y="732.5" width="19.0" height="5.5" fill="#c8f6a8" stroke="#157a30" stroke-width="1"/><path d="M47.0 590.0L52.0 617.0" stroke="#3c3ca0" stroke-width="1"/><path d="M50.0 590.0L59.0 594.0" stroke="#3c3ca0" stroke-width="1"/><path d="M63.0 590.0L66.0 594.0" stroke="#3c3ca0" stroke-width="1"/><path d="M88.0 590.0L81.0 594.0" stroke="#3c3ca0" stroke-width="1"/><path d="M114.0 590.0L98.0 594.0" stroke="#3c3ca0" stroke-width="1"/><path d="M12.0 600.0L12.0 612.0" stroke="#3c3ca0" stroke-width="1"/><path d="M58.0 608.0L128.0 632.0" stroke="#3c3ca0" stroke-width="1"/><path d="M77.0 608.0L110.0 612.0" stroke="#3c3ca0" stroke-width="1"/><path d="M95.0 608.0L109.0 632.0" stroke="#3c3ca0" stroke-width="1"/><path d="M102.0 608.0L128.0 613.0" stroke="#3c3ca0" stroke-width="1"/><path d="M86.0 617.0L110.0 613.0" stroke="#3c3ca0" stroke-width="1"/><path d="M86.0 630.0L111.0 633.0" stroke="#3c3ca0" stroke-width="1"/><path d="M86.0 639.0L120.0 645.0" stroke="#3c3ca0" stroke-width="1"/><path d="M150.0 620.0L157.0 635.0" stroke="#3c3ca0" stroke-width="1"/><path d="M150.0 630.0L157.0 648.0" stroke="#3c3ca0" stroke-width="1"/><path d="M200.7 602.0L220.4 602.0" stroke="#3c3ca0" stroke-width="1"/><path d="M186.0 616.0L186.0 629.0" stroke="#3c3ca0" stroke-width="1"/><path d="M200.7 645.0L220.4 635.0" stroke="#3c3ca0" stroke-width="1"/><path d="M240.0 622.2L245.0 626.3" stroke="#3c3ca0" stroke-width="1"/><path d="M164.0 684.8L164.0 705.6" stroke="#3c3ca0" stroke-width="1"/><path d="M185.6 678.0L198.0 680.0" stroke="#3c3ca0" stroke-width="1"/><path d="M207.0 695.2L207.0 711.0" stroke="#3c3ca0" stroke-width="1"/><path d="M229.0 695.2L229.0 711.0" stroke="#3c3ca0" stroke-width="1"/><path d="M238.5 678.0L251.7 676.0" stroke="#3c3ca0" stroke-width="1"/><path d="M264.0 683.6L264.0 697.0" stroke="#3c3ca0" stroke-width="1"/><path d="M185.6 690.0L190.0 690.0" stroke="#3c3ca0" stroke-width="1"/><path d="M190.0 690.0L190.0 714.0" stroke="#3c3ca0" stroke-width="1"/><path d="M190.0 714.0L198.0 714.0" stroke="#3c3ca0" stroke-width="1"/><path d="M170.0 739.0L170.0 742.0" stroke="#3c3ca0" stroke-width="1"/><path d="M170.0 742.0L264.0 742.0" stroke="#3c3ca0" stroke-width="1"/><path d="M264.0 742.0L264.0 739.0" stroke="#3c3ca0" stroke-width="1"/><path d="M238.5 733.0L251.7 733.0" stroke="#3c3ca0" stroke-width="1"/><path d="M245.0 733.0L245.0 710.0" stroke="#3c3ca0" stroke-width="1"/><path d="M245.0 710.0L251.7 710.0" stroke="#3c3ca0" stroke-width="1"/><path d="M150.0 640.0L141.0 700.0" stroke="#3c3ca0" stroke-width="1"/><path d="M153.0 650.0L142.0 712.0" stroke="#3c3ca0" stroke-width="1"/><path d="M14.0 648.0L26.0 662.0" stroke="#3c3ca0" stroke-width="1"/><path d="M16.0 648.0L26.0 700.0" stroke="#3c3ca0" stroke-width="1"/><path d="M20.0 648.0L30.0 655.3" stroke="#3c3ca0" stroke-width="1"/><path d="M30.0 648.0L56.3 660.0" stroke="#3c3ca0" stroke-width="1"/><path d="M34.0 648.0L56.3 690.0" stroke="#3c3ca0" stroke-width="1"/><path d="M40.0 648.0L62.0 655.3" stroke="#3c3ca0" stroke-width="1"/><path d="M48.0 648.0L113.6 665.0" stroke="#3c3ca0" stroke-width="1"/><path d="M52.0 648.0L113.6 700.0" stroke="#3c3ca0" stroke-width="1"/><path d="M58.0 648.0L100.0 704.0" stroke="#3c3ca0" stroke-width="1"/><path d="M64.0 648.0L90.0 704.0" stroke="#3c3ca0" stroke-width="1"/><path d="M72.0 648.0L113.6 740.0" stroke="#3c3ca0" stroke-width="1"/><path d="M80.0 648.0L105.0 704.0" stroke="#3c3ca0" stroke-width="1"/><path d="M112.0 647.0L45.7 662.0" stroke="#3c3ca0" stroke-width="1"/><path d="M113.0 647.0L45.7 688.0" stroke="#3c3ca0" stroke-width="1"/><path d="M114.0 647.0L45.7 716.0" stroke="#3c3ca0" stroke-width="1"/><path d="M115.0 647.0L78.8 662.0" stroke="#3c3ca0" stroke-width="1"/><path d="M116.0 647.0L78.8 690.0" stroke="#3c3ca0" stroke-width="1"/><path d="M117.0 647.0L78.8 714.0" stroke="#3c3ca0" stroke-width="1"/><path d="M118.0 647.0L100.0 704.0" stroke="#3c3ca0" stroke-width="1"/><path d="M119.0 647.0L92.0 704.0" stroke="#3c3ca0" stroke-width="1"/><path d="M120.0 647.0L113.6 670.0" stroke="#3c3ca0" stroke-width="1"/><path d="M121.0 647.0L113.6 690.0" stroke="#3c3ca0" stroke-width="1"/><path d="M122.0 647.0L124.0 655.3" stroke="#3c3ca0" stroke-width="1"/><path d="M124.0 647.0L130.0 655.3" stroke="#3c3ca0" stroke-width="1"/><path d="M106.0 648.0L40.0 655.3" stroke="#3c3ca0" stroke-width="1"/><path d="M104.0 648.0L60.0 682.4" stroke="#3c3ca0" stroke-width="1"/><path d="M110.0 648.0L66.0 709.0" stroke="#3c3ca0" stroke-width="1"/><path d="M108.0 648.0L70.0 655.3" stroke="#3c3ca0" stroke-width="1"/><path d="M126.0 648.0L113.6 720.0" stroke="#3c3ca0" stroke-width="1"/><path d="M128.0 648.0L135.1 700.0" stroke="#3c3ca0" stroke-width="1"/><path d="M86.0 625.0L112.0 622.0" stroke="#3c3ca0" stroke-width="1"/><path d="M86.0 617.0L120.0 640.0" stroke="#3c3ca0" stroke-width="1"/><path d="M60.0 608.0L120.0 640.0" stroke="#3c3ca0" stroke-width="1"/><path d="M70.0 608.0L112.0 646.0" stroke="#3c3ca0" stroke-width="1"/><path d="M95.0 590.0L108.0 646.0" stroke="#3c3ca0" stroke-width="1"/><path d="M130.0 590.0L112.0 648.0" stroke="#3c3ca0" stroke-width="1"/><path d="M10.0 620.0L26.0 690.0" stroke="#3c3ca0" stroke-width="1"/><path d="M10.0 640.0L26.0 720.0" stroke="#3c3ca0" stroke-width="1"/><rect x="1.5" y="575.5" width="169.5" height="62.2" fill="rgba(60,140,220,0.28)" stroke="#1f6fd8" stroke-width="1.3"/></svg>
<!-- editor -->
<div class="a" style="left:282px;top:51px;width:1098px;height:349px;background:#fff;border:1px solid #d6d6d6"></div>
<div class="a" style="left:283px;top:52px;width:1096px;height:18px;background:#e9e9e9"></div>
<div class="a" style="left:613px;top:52px;width:208px;height:18px;background:#f7f7f7"></div>
<svg class="a" style="left:285px;top:55px" width="12" height="12" viewBox="0 0 12 12"><path d="M1 1.5H7L4 5H9L5 9H11M2 4L5 1.5M3 7L6 5M6 11L9 9" fill="none" stroke="#444" stroke-width="0.9"/></svg>
<div class="t" style="left:299.5px;top:55px">Level Crossing Traffic Control</div>
<div class="t" style="left:430.5px;top:55px">SA_Complete.docx</div>
<div class="t" style="left:523.5px;top:55px">LA_Complete.docx</div>
<svg class="a" style="left:618px;top:55px" width="12" height="12" viewBox="0 0 12 12"><rect x="4" y="0.5" width="4" height="3.5" fill="#f0c040" stroke="#806010" stroke-width="0.7"/><rect x="0.5" y="7.5" width="4" height="3.5" fill="#60b0f0" stroke="#204080" stroke-width="0.7"/><rect x="7.5" y="7.5" width="4" height="3.5" fill="#60c070" stroke="#206030" stroke-width="0.7"/><path d="M6 4V6M2.5 7.5V6H9.5V7.5" fill="none" stroke="#333" stroke-width="0.7"/></svg>
<div class="t" style="left:630.8px;top:55px">*[PAB] Behavioral components and functions</div>
<svg class="a" style="left:807px;top:57px" width="8" height="8" viewBox="0 0 8 8"><path d="M1 1L7 7M7 1L1 7" stroke="#777" stroke-width="1.6"/><path d="M1 1L7 7M7 1L1 7" stroke="#fff" stroke-width="0.5"/></svg>
<svg class="a" style="left:1347px;top:55px" width="30" height="12" viewBox="0 0 30 12"><rect x="1.5" y="3.5" width="7" height="2.5" fill="#fff" stroke="#555" stroke-width="0.9"/><rect x="17.5" y="1.5" width="8" height="9" fill="#fff" stroke="#555" stroke-width="0.9"/><path d="M17.5 3.5H25.5" stroke="#555"/></svg>
<div class="a" style="left:283px;top:70px;width:834px;height:16px;background:#f7f7f7;border-bottom:1px solid #e0e0e0"></div>
<svg class="a" style="left:282px;top:68px" width="600" height="20" viewBox="282 68 600 20"><rect x="285" y="76" width="4" height="4" fill="#c8e0a0" stroke="#70a070" stroke-width="0.8"/><rect x="291" y="72" width="4" height="4" fill="#b8e090" stroke="#60a060" stroke-width="0.8"/><rect x="291" y="79" width="4" height="4" fill="#fff" stroke="#6090d0" stroke-width="0.9"/><path d="M301.6 76.0H307.6L304.6 79.3Z" fill="#111"/><rect x="313" y="71.5" width="4" height="3.5" fill="#fff0c0" stroke="#d09020" stroke-width="0.8"/><path d="M314 75V82M314 78H319M314 82H319" stroke="#222" stroke-width="0.8"/><rect x="319" y="76" width="4.5" height="3.5" fill="#40b060"/><rect x="319" y="80" width="4.5" height="3" fill="#4080d0"/><path d="M329.0 76.0H335.0L332.0 79.3Z" fill="#111"/><path d="M341 72H351M341 72V76M351 72V76" stroke="#e04040" stroke-width="0.9"/><rect x="340" y="77" width="3" height="6" fill="#e0b040"/><rect x="345" y="77" width="2.5" height="5" fill="#4070c0"/><rect x="350" y="76" width="2" height="6" fill="#40a050"/><path d="M356.0 76.0H362.0L359.0 79.3Z" fill="#111"/><rect x="367.5" y="72" width="3.5" height="10.5" fill="#f8e090" stroke="#c09030" stroke-width="0.8"/><rect x="375" y="72" width="3.5" height="10.5" fill="#60d060" stroke="#208030" stroke-width="0.8"/><path d="M371 73L375 78" stroke="#222" stroke-width="0.9"/><path d="M383.3 76.0H389.3L386.3 79.3Z" fill="#111"/><path d="M393.3 71V84" stroke="#a8a8a8" stroke-width="1"/><rect x="401.5" y="74.5" width="8" height="8" fill="#f8f8f8" stroke="#999" stroke-width="0.9"/><path d="M406 76L410 72" stroke="#888" stroke-width="1.2"/><rect x="417.5" y="75.5" width="9" height="7" fill="#f4f8ff" stroke="#7090c0" stroke-width="0.9"/><path d="M418 72L421 75M421 72L418 75" stroke="#555" stroke-width="0.7"/><path d="M423 76L427 72" stroke="#30a040" stroke-width="1.6"/><path d="M432.4 71V84" stroke="#a8a8a8" stroke-width="1"/><rect x="443.5" y="71.5" width="4" height="3.5" fill="#f0c040" stroke="#806010" stroke-width="0.7"/><rect x="440.5" y="78.5" width="4" height="3.5" fill="#60b0f0" stroke="#204080" stroke-width="0.7"/><rect x="446.5" y="78.5" width="4" height="3.5" fill="#60c070" stroke="#206030" stroke-width="0.7"/><path d="M445.5 75V77M442.5 78.5V77H448.5V78.5" fill="none" stroke="#333" stroke-width="0.7"/><path d="M455.2 76.0H461.2L458.2 79.3Z" fill="#111"/><path d="M465.5 71V84" stroke="#a8a8a8" stroke-width="1"/><rect x="472.5" y="72.5" width="7" height="8" fill="#f4f4f4" stroke="#c8c8c8"/><rect x="475.5" y="75.5" width="7" height="8" fill="#f4f4f4" stroke="#c8c8c8"/><rect x="490.5" y="73.5" width="9" height="10" rx="1" fill="#e8e8e8" stroke="#a8a8a8"/><rect x="493" y="72" width="4" height="2" fill="#a8a8a8"/><rect x="493" y="77" width="5" height="5" fill="#c8c8c8"/><path d="M504.6 76.0H510.6L507.6 79.3Z" fill="#999"/><path d="M514.5 71V84" stroke="#a8a8a8" stroke-width="1"/><circle cx="527" cy="77.5" r="2.6" fill="#a0a0a0"/><path d="M538.5 72.5L548 82" stroke="#2050b0" stroke-width="1.3"/><circle cx="543" cy="77.5" r="2" fill="none" stroke="#70a0d0" stroke-width="1"/><circle cx="560" cy="75.5" r="2.6" fill="#a0a0a0"/><rect x="554" y="80" width="11" height="2.5" fill="#b8b8b8"/><path d="M571 72.5L581 82" stroke="#2050b0" stroke-width="1.3"/><circle cx="576" cy="76" r="2" fill="none" stroke="#70a0d0" stroke-width="1"/><rect x="571" y="80.5" width="11" height="2.5" fill="#20409a"/><path d="M590 73L598 81M598 73L590 81" stroke="#e02020" stroke-width="2.2"/><path d="M605 73L615 82M614 73L606 82" stroke="#a8a8a8" stroke-width="2"/><circle cx="610" cy="76" r="2" fill="#c8c8c8"/><path d="M619.9 71V84" stroke="#a8a8a8" stroke-width="1"/><text x="629" y="82" font-family="Liberation Serif" font-weight="bold" font-size="11" fill="#a8a8a8">B</text><text x="645" y="82" font-family="Liberation Serif" font-style="italic" font-size="11" fill="#a8a8a8">I</text><text x="660.5" y="82" font-family="Liberation Serif" font-size="11" fill="#a8a8a8">A</text><path d="M675.5 76.0H681.5L678.5 79.3Z" fill="#777"/><rect x="687.5" y="74.5" width="9" height="8" fill="#f0f0f0" stroke="#a8a8a8"/><path d="M688 82L691 78L694 81L696 79" stroke="#a8a8a8" fill="none"/><path d="M702.5 71V84" stroke="#a8a8a8" stroke-width="1"/><path d="M712 76L716 72L720 77L716 81Z" fill="#f0f0f0" stroke="#a8a8a8"/><path d="M725.5 76.0H731.5L728.5 79.3Z" fill="#777"/><path d="M737 83H740M741 82L748 73" stroke="#a8a8a8" stroke-width="1.5"/><path d="M752.2 76.0H758.2L755.2 79.3Z" fill="#777"/><path d="M765 77.5H774M771.5 75L774.5 77.5L771.5 80" fill="none" stroke="#3060c0" stroke-width="1"/><path d="M780.3 76.0H786.3L783.3 79.3Z" fill="#111"/><rect x="791.5" y="71.5" width="10" height="11" fill="#dbe8f8" stroke="#5080c0"/><path d="M794 74L799 80" stroke="#d02020" stroke-width="1.5"/><circle cx="795" cy="74" r="1.3" fill="#333"/><path d="M809 78L813 74L814 76L818 73L819 78L814 82L813 80Z" fill="#fff" stroke="#b8b8b8"/><rect x="824.5" y="72.5" width="6" height="8" fill="#f4f4f4" stroke="#b8b8b8"/><rect x="828.5" y="75.5" width="6" height="8" fill="#f4f4f4" stroke="#b8b8b8"/><path d="M839.7 71V84" stroke="#a8a8a8" stroke-width="1"/><rect x="846.5" y="72.5" width="10" height="10" fill="none" stroke="#999" stroke-dasharray="2 2"/><circle cx="851.5" cy="77.5" r="1.5" fill="none" stroke="#999"/><rect x="863.5" y="72.5" width="9" height="10" fill="#fafafa" stroke="#c8c8c8"/><rect x="864" y="73" width="3" height="3" fill="#aaa"/><rect x="864" y="79" width="3" height="3" fill="#aaa"/></svg>
<svg class="a" style="left:283px;top:86px;letter-spacing:0" width="821" height="302" viewBox="283 86 821 302">
<defs>
<linearGradient id="gAct" x1="0" y1="0" x2="0" y2="1"><stop offset="0" stop-color="#d8f7ff"/><stop offset="1" stop-color="#c2e3f9"/></linearGradient>
<linearGradient id="gAct2" x1="0" y1="0" x2="0" y2="1"><stop offset="0" stop-color="#d8f8ff"/><stop offset="1" stop-color="#c8ecfd"/></linearGradient>
<linearGradient id="gSoi" x1="0" y1="0" x2="0" y2="1"><stop offset="0" stop-color="#c6e7fb"/><stop offset="1" stop-color="#8eacdf"/></linearGradient>
<linearGradient id="gPcc" x1="0" y1="0" x2="0" y2="1"><stop offset="0" stop-color="#c4e6fc"/><stop offset="1" stop-color="#8caadd"/></linearGradient>
<linearGradient id="gMim" x1="0" y1="0" x2="0" y2="1"><stop offset="0" stop-color="#c4e4fa"/><stop offset="1" stop-color="#94b2e0"/></linearGradient>
<linearGradient id="gSsm" x1="0" y1="0" x2="0" y2="1"><stop offset="0" stop-color="#c6e8fc"/><stop offset="1" stop-color="#8eacdf"/></linearGradient>
</defs>
<rect x="283" y="86" width="821" height="302" fill="#fff"/>
<path d="M318 164.5H1014L1023.5 174V400H318Z" fill="#fffdc8" stroke="#f5c97a" stroke-width="1"/>
<path d="M1014 164.5V174H1023.5" fill="none" stroke="#f5c97a" stroke-width="1"/>
<rect x="1030" y="157.5" width="90" height="250" fill="#fffdc8" stroke="#f5c97a" stroke-width="1"/>
<rect x="328.2" y="121.5" width="151.1" height="101.0" fill="url(#gAct)" stroke="#6a62b0" stroke-width="1.2"/><circle cx="352.3" cy="126.6" r="1.8" fill="#fff" stroke="#222" stroke-width="0.8"/><path d="M352.3 128.4V132.1M348.8 130.1H355.8M352.3 132.1L349.3 135.6M352.3 132.1L355.3 135.6" stroke="#222" stroke-width="0.8" fill="none"/><text x="360.3" y="133.6" font-family="Liberation Sans" font-size="8.8" fill="#111" stroke="#111" stroke-width="0.2" letter-spacing="-0.2">Station information system</text>
<rect x="498.3" y="90.0" width="502.7" height="64.8" fill="url(#gAct2)" stroke="#6a62b0" stroke-width="1.2"/><circle cx="703.3" cy="95.2" r="1.8" fill="#fff" stroke="#222" stroke-width="0.8"/><path d="M703.3 97.0V100.7M699.8 98.7H706.8M703.3 100.7L700.3 104.2M703.3 100.7L706.3 104.2" stroke="#222" stroke-width="0.8" fill="none"/><text x="711.3" y="102.2" font-family="Liberation Sans" font-size="8.8" fill="#111" stroke="#111" stroke-width="0.2" letter-spacing="-0.2">Traffic control operators</text>
<rect x="550.9" y="179.3" width="323.7" height="69.9" fill="url(#gSoi)" stroke="#6c64b4" stroke-width="1.2"/><path d="M656.0 183.0l-1.5 1.5l1.5 1.5l-1.5 1.5l1.5 1.5l-1.5 1.5l1.5 1.5" fill="none" stroke="#222" stroke-width="0.8"/><rect x="657.0" y="183.0" width="8" height="9" rx="1" fill="#dde8f8" stroke="#222" stroke-width="1"/><text x="658.5" y="190.5" font-family="Liberation Sans" font-size="7.5" font-weight="bold" fill="#222">P</text><text x="668.0" y="191.0" font-family="Liberation Sans" font-size="8.8" fill="#111" stroke="#111" stroke-width="0.2" letter-spacing="-0.2">System Operators interface</text>
<rect x="335.0" y="265.2" width="359.5" height="204.8" fill="url(#gPcc)" stroke="#6c64b4" stroke-width="1.2"/><path d="M454.0 269.4l-1.5 1.5l1.5 1.5l-1.5 1.5l1.5 1.5l-1.5 1.5l1.5 1.5" fill="none" stroke="#222" stroke-width="0.8"/><rect x="455.0" y="269.4" width="8" height="9" rx="1" fill="#dde8f8" stroke="#222" stroke-width="1"/><text x="456.5" y="276.9" font-family="Liberation Sans" font-size="7.5" font-weight="bold" fill="#222">P</text><text x="466.0" y="277.4" font-family="Liberation Sans" font-size="8.8" fill="#111" stroke="#111" stroke-width="0.2" letter-spacing="-0.2">Procedures command control</text>
<rect x="1037.5" y="347.3" width="102.5" height="82.7" fill="url(#gSsm)" stroke="#6c64b4" stroke-width="1.2"/><text x="1100.0" y="359.0" font-family="Liberation Sans" font-size="8.8" fill="#111" stroke="#111" stroke-width="0.2" letter-spacing="-0.2"></text>
<rect x="335.0" y="136.0" width="65.2" height="35.6" fill="#c6f6a8" stroke="#1f7a38" stroke-width="1.2"/><ellipse cx="345.0" cy="153.8" rx="5.2" ry="4.1" fill="#b4ccf2" stroke="#1a2a50" stroke-width="1"/><text x="345.0" y="155.6" font-family="Liberation Sans" font-size="5.2" font-weight="bold" fill="#1a2a50" text-anchor="middle">PF</text><text x="375.1" y="148.7" font-family="Liberation Sans" font-size="8.45" fill="#116a36" stroke="#116a36" stroke-width="0.15" text-anchor="middle">Determine</text><text x="375.1" y="158.0" font-family="Liberation Sans" font-size="8.45" fill="#116a36" stroke="#116a36" stroke-width="0.15" text-anchor="middle">train</text><text x="375.1" y="167.3" font-family="Liberation Sans" font-size="8.45" fill="#116a36" stroke="#116a36" stroke-width="0.15" text-anchor="middle">timetables</text>
<rect x="406.9" y="136.0" width="65.4" height="35.6" fill="#c6f6a8" stroke="#1f7a38" stroke-width="1.2"/><ellipse cx="416.9" cy="153.8" rx="5.2" ry="4.1" fill="#b4ccf2" stroke="#1a2a50" stroke-width="1"/><text x="416.9" y="155.6" font-family="Liberation Sans" font-size="5.2" font-weight="bold" fill="#1a2a50" text-anchor="middle">PF</text><text x="447.1" y="148.7" font-family="Liberation Sans" font-size="8.45" fill="#116a36" stroke="#116a36" stroke-width="0.15" text-anchor="middle">Launch the</text><text x="447.1" y="158.0" font-family="Liberation Sans" font-size="8.45" fill="#116a36" stroke="#116a36" stroke-width="0.15" text-anchor="middle">departure</text><text x="447.1" y="167.3" font-family="Liberation Sans" font-size="8.45" fill="#116a36" stroke="#116a36" stroke-width="0.15" text-anchor="middle">procedure</text>
<rect x="378.0" y="178.8" width="65.4" height="36.2" fill="#c6f6a8" stroke="#1f7a38" stroke-width="1.2"/><ellipse cx="388.0" cy="196.9" rx="5.2" ry="4.1" fill="#b4ccf2" stroke="#1a2a50" stroke-width="1"/><text x="388.0" y="198.7" font-family="Liberation Sans" font-size="5.2" font-weight="bold" fill="#1a2a50" text-anchor="middle">PF</text><text x="418.2" y="196.4" font-family="Liberation Sans" font-size="8.45" fill="#116a36" stroke="#116a36" stroke-width="0.15" text-anchor="middle" font-style="italic">Manage train</text><text x="418.2" y="205.8" font-family="Liberation Sans" font-size="8.45" fill="#116a36" stroke="#116a36" stroke-width="0.15" text-anchor="middle" font-style="italic">traffic</text>
<rect x="512.0" y="110.4" width="57.8" height="35.9" fill="#c6f6a8" stroke="#1f7a38" stroke-width="1.2"/><ellipse cx="522.0" cy="128.4" rx="5.2" ry="4.1" fill="#b4ccf2" stroke="#1a2a50" stroke-width="1"/><text x="522.0" y="130.2" font-family="Liberation Sans" font-size="5.2" font-weight="bold" fill="#1a2a50" text-anchor="middle">PF</text><text x="548.4" y="127.9" font-family="Liberation Sans" font-size="8.45" fill="#116a36" stroke="#116a36" stroke-width="0.15" text-anchor="middle">Monitor</text><text x="548.4" y="137.2" font-family="Liberation Sans" font-size="8.45" fill="#116a36" stroke="#116a36" stroke-width="0.15" text-anchor="middle">the traffic</text>
<rect x="583.5" y="110.4" width="57.8" height="35.9" fill="#c6f6a8" stroke="#1f7a38" stroke-width="1.2"/><ellipse cx="593.5" cy="128.4" rx="5.2" ry="4.1" fill="#b4ccf2" stroke="#1a2a50" stroke-width="1"/><text x="593.5" y="130.2" font-family="Liberation Sans" font-size="5.2" font-weight="bold" fill="#1a2a50" text-anchor="middle">PF</text><text x="619.9" y="123.3" font-family="Liberation Sans" font-size="8.45" fill="#116a36" stroke="#116a36" stroke-width="0.15" text-anchor="middle">Monitor</text><text x="619.9" y="132.6" font-family="Liberation Sans" font-size="8.45" fill="#116a36" stroke="#116a36" stroke-width="0.15" text-anchor="middle">the status</text><text x="619.9" y="141.9" font-family="Liberation Sans" font-size="8.45" fill="#116a36" stroke="#116a36" stroke-width="0.15" text-anchor="middle">of instruc...</text>
<rect x="655.0" y="110.4" width="80.0" height="35.9" fill="#c6f6a8" stroke="#1f7a38" stroke-width="1.2"/><ellipse cx="665.0" cy="128.4" rx="5.2" ry="4.1" fill="#b4ccf2" stroke="#1a2a50" stroke-width="1"/><text x="665.0" y="130.2" font-family="Liberation Sans" font-size="5.2" font-weight="bold" fill="#1a2a50" text-anchor="middle">PF</text><text x="702.5" y="123.3" font-family="Liberation Sans" font-size="8.45" fill="#116a36" stroke="#116a36" stroke-width="0.15" text-anchor="middle">Monitor the</text><text x="702.5" y="132.6" font-family="Liberation Sans" font-size="8.45" fill="#116a36" stroke="#116a36" stroke-width="0.15" text-anchor="middle">proper</text><text x="702.5" y="141.9" font-family="Liberation Sans" font-size="8.45" fill="#116a36" stroke="#116a36" stroke-width="0.15" text-anchor="middle">functioning of t...</text>
<rect x="749.3" y="110.4" width="58.2" height="35.9" fill="#c6f6a8" stroke="#1f7a38" stroke-width="1.2"/><ellipse cx="759.3" cy="128.4" rx="5.2" ry="4.1" fill="#b4ccf2" stroke="#1a2a50" stroke-width="1"/><text x="759.3" y="130.2" font-family="Liberation Sans" font-size="5.2" font-weight="bold" fill="#1a2a50" text-anchor="middle">PF</text><text x="785.9" y="123.3" font-family="Liberation Sans" font-size="8.45" fill="#116a36" stroke="#116a36" stroke-width="0.15" text-anchor="middle">Stop trains</text><text x="785.9" y="132.6" font-family="Liberation Sans" font-size="8.45" fill="#116a36" stroke="#116a36" stroke-width="0.15" text-anchor="middle">in an</text><text x="785.9" y="141.9" font-family="Liberation Sans" font-size="8.45" fill="#116a36" stroke="#116a36" stroke-width="0.15" text-anchor="middle">emergency</text>
<rect x="821.4" y="110.4" width="76.1" height="35.9" fill="#c6f6a8" stroke="#1f7a38" stroke-width="1.2"/><ellipse cx="831.4" cy="128.4" rx="5.2" ry="4.1" fill="#b4ccf2" stroke="#1a2a50" stroke-width="1"/><text x="831.4" y="130.2" font-family="Liberation Sans" font-size="5.2" font-weight="bold" fill="#1a2a50" text-anchor="middle">PF</text><text x="867.0" y="123.3" font-family="Liberation Sans" font-size="8.45" fill="#116a36" stroke="#116a36" stroke-width="0.15" text-anchor="middle">Release trains</text><text x="867.0" y="132.6" font-family="Liberation Sans" font-size="8.45" fill="#116a36" stroke="#116a36" stroke-width="0.15" text-anchor="middle">after emergency</text><text x="867.0" y="141.9" font-family="Liberation Sans" font-size="8.45" fill="#116a36" stroke="#116a36" stroke-width="0.15" text-anchor="middle">stop</text>
<rect x="913.7" y="110.4" width="77.0" height="35.9" fill="#c6f6a8" stroke="#1f7a38" stroke-width="1.2"/><ellipse cx="923.7" cy="128.4" rx="5.2" ry="4.1" fill="#b4ccf2" stroke="#1a2a50" stroke-width="1"/><text x="923.7" y="130.2" font-family="Liberation Sans" font-size="5.2" font-weight="bold" fill="#1a2a50" text-anchor="middle">PF</text><text x="959.7" y="123.3" font-family="Liberation Sans" font-size="8.45" fill="#116a36" stroke="#116a36" stroke-width="0.15" text-anchor="middle">Release road</text><text x="959.7" y="132.6" font-family="Liberation Sans" font-size="8.45" fill="#116a36" stroke="#116a36" stroke-width="0.15" text-anchor="middle">traffic after</text><text x="959.7" y="141.9" font-family="Liberation Sans" font-size="8.45" fill="#116a36" stroke="#116a36" stroke-width="0.15" text-anchor="middle">emergency stop</text>
<rect x="565.2" y="207.4" width="71.6" height="34.7" fill="#c6f6a8" stroke="#1f7a38" stroke-width="1.2"/><ellipse cx="575.2" cy="224.8" rx="5.2" ry="4.1" fill="#e4f4dc" stroke="#1a3a20" stroke-width="1"/><text x="575.2" y="226.6" font-family="Liberation Sans" font-size="5" font-weight="bold" fill="#333" text-anchor="middle">PF</text><text x="608.5" y="219.6" font-family="Liberation Sans" font-size="8.45" fill="#116a36" stroke="#116a36" stroke-width="0.15" text-anchor="middle">Display traffic</text><text x="608.5" y="228.9" font-family="Liberation Sans" font-size="8.45" fill="#116a36" stroke="#116a36" stroke-width="0.15" text-anchor="middle">and system</text><text x="608.5" y="238.2" font-family="Liberation Sans" font-size="8.45" fill="#116a36" stroke="#116a36" stroke-width="0.15" text-anchor="middle">alerts</text>
<rect x="665.6" y="207.4" width="71.6" height="34.7" fill="#c6f6a8" stroke="#1f7a38" stroke-width="1.2"/><ellipse cx="675.6" cy="224.8" rx="5.2" ry="4.1" fill="#e4f4dc" stroke="#1a3a20" stroke-width="1"/><text x="675.6" y="226.6" font-family="Liberation Sans" font-size="5" font-weight="bold" fill="#333" text-anchor="middle">PF</text><text x="708.9" y="219.6" font-family="Liberation Sans" font-size="8.45" fill="#116a36" stroke="#116a36" stroke-width="0.15" text-anchor="middle">Process</text><text x="708.9" y="228.9" font-family="Liberation Sans" font-size="8.45" fill="#116a36" stroke="#116a36" stroke-width="0.15" text-anchor="middle">operator</text><text x="708.9" y="238.2" font-family="Liberation Sans" font-size="8.45" fill="#116a36" stroke="#116a36" stroke-width="0.15" text-anchor="middle">commands</text>
<rect x="766.0" y="207.4" width="93.5" height="34.7" fill="#c6f6a8" stroke="#1f7a38" stroke-width="1.2"/><ellipse cx="776.0" cy="224.8" rx="5.2" ry="4.1" fill="#e4f4dc" stroke="#1a3a20" stroke-width="1"/><text x="776.0" y="226.6" font-family="Liberation Sans" font-size="5" font-weight="bold" fill="#333" text-anchor="middle">PF</text><text x="820.2" y="219.6" font-family="Liberation Sans" font-size="8.45" fill="#116a36" stroke="#116a36" stroke-width="0.15" text-anchor="middle">Display the traffic</text><text x="820.2" y="228.9" font-family="Liberation Sans" font-size="8.45" fill="#116a36" stroke="#116a36" stroke-width="0.15" text-anchor="middle">and the system map</text><text x="820.2" y="238.2" font-family="Liberation Sans" font-size="8.45" fill="#116a36" stroke="#116a36" stroke-width="0.15" text-anchor="middle">situation</text>
<rect x="363.7" y="291.0" width="69.1" height="35.7" fill="#c6f6a8" stroke="#1f7a38" stroke-width="1.2"/><ellipse cx="373.7" cy="308.9" rx="5.2" ry="4.1" fill="#e4f4dc" stroke="#1a3a20" stroke-width="1"/><text x="373.7" y="310.7" font-family="Liberation Sans" font-size="5" font-weight="bold" fill="#333" text-anchor="middle">PF</text><text x="405.8" y="303.8" font-family="Liberation Sans" font-size="8.45" fill="#116a36" stroke="#116a36" stroke-width="0.15" text-anchor="middle">Launch a</text><text x="405.8" y="313.1" font-family="Liberation Sans" font-size="8.45" fill="#116a36" stroke="#116a36" stroke-width="0.15" text-anchor="middle">departure</text><text x="405.8" y="322.4" font-family="Liberation Sans" font-size="8.45" fill="#116a36" stroke="#116a36" stroke-width="0.15" text-anchor="middle">procedure</text>
<rect x="470.8" y="291.0" width="68.8" height="35.7" fill="#c6f6a8" stroke="#1f7a38" stroke-width="1.2"/><ellipse cx="480.8" cy="308.9" rx="5.2" ry="4.1" fill="#e4f4dc" stroke="#1a3a20" stroke-width="1"/><text x="480.8" y="310.7" font-family="Liberation Sans" font-size="5" font-weight="bold" fill="#333" text-anchor="middle">PF</text><text x="512.7" y="303.8" font-family="Liberation Sans" font-size="8.45" fill="#116a36" stroke="#116a36" stroke-width="0.15" text-anchor="middle">Launch an</text><text x="512.7" y="313.1" font-family="Liberation Sans" font-size="8.45" fill="#116a36" stroke="#116a36" stroke-width="0.15" text-anchor="middle">arrival</text><text x="512.7" y="322.4" font-family="Liberation Sans" font-size="8.45" fill="#116a36" stroke="#116a36" stroke-width="0.15" text-anchor="middle">procedure</text>
<rect x="363.7" y="342.3" width="69.1" height="35.3" fill="#c6f6a8" stroke="#1f7a38" stroke-width="1.2"/><ellipse cx="373.7" cy="360.0" rx="5.2" ry="4.1" fill="#e4f4dc" stroke="#1a3a20" stroke-width="1"/><text x="373.7" y="361.8" font-family="Liberation Sans" font-size="5" font-weight="bold" fill="#333" text-anchor="middle">PF</text><text x="405.8" y="354.9" font-family="Liberation Sans" font-size="8.45" fill="#116a36" stroke="#116a36" stroke-width="0.15" text-anchor="middle">Supervise</text><text x="405.8" y="364.2" font-family="Liberation Sans" font-size="8.45" fill="#116a36" stroke="#116a36" stroke-width="0.15" text-anchor="middle">delayed</text><text x="405.8" y="373.5" font-family="Liberation Sans" font-size="8.45" fill="#116a36" stroke="#116a36" stroke-width="0.15" text-anchor="middle">departure</text>
<rect x="470.8" y="342.3" width="68.8" height="35.3" fill="#c6f6a8" stroke="#1f7a38" stroke-width="1.2"/><ellipse cx="480.8" cy="360.0" rx="5.2" ry="4.1" fill="#e4f4dc" stroke="#1a3a20" stroke-width="1"/><text x="480.8" y="361.8" font-family="Liberation Sans" font-size="5" font-weight="bold" fill="#333" text-anchor="middle">PF</text><text x="512.7" y="359.5" font-family="Liberation Sans" font-size="8.45" fill="#116a36" stroke="#116a36" stroke-width="0.15" text-anchor="middle">Supervise</text><text x="512.7" y="368.8" font-family="Liberation Sans" font-size="8.45" fill="#116a36" stroke="#116a36" stroke-width="0.15" text-anchor="middle">delayed arrival</text>
<rect x="578.2" y="326.1" width="69.4" height="35.6" fill="#c6f6a8" stroke="#1f7a38" stroke-width="1.2"/><ellipse cx="588.2" cy="343.9" rx="5.2" ry="4.1" fill="#e4f4dc" stroke="#1a3a20" stroke-width="1"/><text x="588.2" y="345.7" font-family="Liberation Sans" font-size="5" font-weight="bold" fill="#333" text-anchor="middle">PF</text><text x="620.4" y="343.4" font-family="Liberation Sans" font-size="8.45" fill="#116a36" stroke="#116a36" stroke-width="0.15" text-anchor="middle">Release road</text><text x="620.4" y="352.7" font-family="Liberation Sans" font-size="8.45" fill="#116a36" stroke="#116a36" stroke-width="0.15" text-anchor="middle">traffic</text>
<rect x="578.2" y="377.6" width="69.4" height="35.4" fill="#c6f6a8" stroke="#1f7a38" stroke-width="1.2"/><ellipse cx="588.2" cy="395.3" rx="5.2" ry="4.1" fill="#e4f4dc" stroke="#1a3a20" stroke-width="1"/><text x="588.2" y="397.1" font-family="Liberation Sans" font-size="5" font-weight="bold" fill="#333" text-anchor="middle">PF</text><text x="620.4" y="394.9" font-family="Liberation Sans" font-size="8.45" fill="#116a36" stroke="#116a36" stroke-width="0.15" text-anchor="middle"></text><text x="620.4" y="404.1" font-family="Liberation Sans" font-size="8.45" fill="#116a36" stroke="#116a36" stroke-width="0.15" text-anchor="middle"></text>
<rect x="809.2" y="264.8" width="202.0" height="65.2" fill="url(#gMim)" stroke="#202040" stroke-width="1.6"/><path d="M852.5 269.3l-1.5 1.5l1.5 1.5l-1.5 1.5l1.5 1.5l-1.5 1.5l1.5 1.5" fill="none" stroke="#222" stroke-width="0.8"/><rect x="853.5" y="269.3" width="8" height="9" rx="1" fill="#dde8f8" stroke="#222" stroke-width="1"/><text x="855.0" y="276.8" font-family="Liberation Sans" font-size="7.5" font-weight="bold" fill="#222">P</text><text x="864.5" y="277.3" font-family="Liberation Sans" font-size="8.8" fill="#111" stroke="#111" stroke-width="0.2" letter-spacing="-0.2">Major incident management</text>
<rect x="824.0" y="286.7" width="86.6" height="35.9" fill="#c6f6a8" stroke="#1f7a38" stroke-width="1.2"/><ellipse cx="834.0" cy="304.6" rx="5.2" ry="4.1" fill="#e4f4dc" stroke="#1a3a20" stroke-width="1"/><text x="834.0" y="306.4" font-family="Liberation Sans" font-size="5" font-weight="bold" fill="#333" text-anchor="middle">PF</text><text x="874.8" y="299.5" font-family="Liberation Sans" font-size="8.45" fill="#116a36" stroke="#116a36" stroke-width="0.15" text-anchor="middle">Detect and secure</text><text x="874.8" y="308.8" font-family="Liberation Sans" font-size="8.45" fill="#116a36" stroke="#116a36" stroke-width="0.15" text-anchor="middle">a vehicle stopped</text><text x="874.8" y="318.1" font-family="Liberation Sans" font-size="8.45" fill="#116a36" stroke="#116a36" stroke-width="0.15" text-anchor="middle">on the track</text>
<rect x="931.5" y="286.7" width="72.3" height="35.9" fill="#c6f6a8" stroke="#1f7a38" stroke-width="1.2"/><ellipse cx="941.5" cy="304.6" rx="5.2" ry="4.1" fill="#e4f4dc" stroke="#1a3a20" stroke-width="1"/><text x="941.5" y="306.4" font-family="Liberation Sans" font-size="5" font-weight="bold" fill="#333" text-anchor="middle">PF</text><text x="975.1" y="304.2" font-family="Liberation Sans" font-size="8.45" fill="#116a36" stroke="#116a36" stroke-width="0.15" text-anchor="middle">Detect a critical</text><text x="975.1" y="313.5" font-family="Liberation Sans" font-size="8.45" fill="#116a36" stroke="#116a36" stroke-width="0.15" text-anchor="middle">fault</text>
<rect x="809.2" y="366.2" width="201.8" height="103.8" fill="url(#gSsm)" stroke="#6c64b4" stroke-width="1.2"/><path d="M854.0 370.0l-1.5 1.5l1.5 1.5l-1.5 1.5l1.5 1.5l-1.5 1.5l1.5 1.5" fill="none" stroke="#222" stroke-width="0.8"/><rect x="855.0" y="370.0" width="8" height="9" rx="1" fill="#dde8f8" stroke="#222" stroke-width="1"/><text x="856.5" y="377.5" font-family="Liberation Sans" font-size="7.5" font-weight="bold" fill="#222">P</text><text x="866.0" y="378.0" font-family="Liberation Sans" font-size="8.8" fill="#111" stroke="#111" stroke-width="0.2" letter-spacing="-0.2">System status management</text>
<rect x="1051.4" y="368.6" width="90" height="40" fill="#c6f6a8" stroke="#1f7a38" stroke-width="1.2"/>
<ellipse cx="1064" cy="389" rx="5.2" ry="4.1" fill="#e4f4dc" stroke="#1a3a20" stroke-width="1"/>
<text x="1076" y="384.5" font-family="Liberation Sans" font-size="8.45" fill="#116a36" stroke="#116a36" stroke-width="0.15">Start/stop</text>
<text x="1102" y="359" font-family="Liberation Sans" font-size="8.8" fill="#111" stroke="#111" stroke-width="0.2">S</text>
<path d="M367.5 222.0 L367.5 265.0" fill="none" stroke="#5858a8" stroke-width="0.9"/>
<path d="M541.0 155.0 L621.0 388.0" fill="none" stroke="#5858a8" stroke-width="0.9"/>
<path d="M559.5 155.0 L573.5 180.0" fill="none" stroke="#5858a8" stroke-width="0.9"/>
<path d="M630.5 155.0 L637.0 180.0" fill="none" stroke="#5858a8" stroke-width="0.9"/>
<path d="M753.0 155.0 L715.0 180.0" fill="none" stroke="#5858a8" stroke-width="0.9"/>
<path d="M876.0 155.0 L793.0 180.0" fill="none" stroke="#5858a8" stroke-width="0.9"/>
<path d="M417.5 267.0 L604.0 248.0" fill="none" stroke="#5858a8" stroke-width="0.9"/>
<path d="M554.0 267.0 L571.0 248.0" fill="none" stroke="#5858a8" stroke-width="0.9"/>
<path d="M604.0 249.0 L676.0 267.0" fill="none" stroke="#5858a8" stroke-width="0.9"/>
<path d="M604.0 249.0 L818.0 367.0" fill="none" stroke="#5858a8" stroke-width="0.9"/>
<path d="M663.0 248.0 L811.0 268.5" fill="none" stroke="#5858a8" stroke-width="0.9"/>
<path d="M693.0 274.4 L811.0 268.5" fill="none" stroke="#5858a8" stroke-width="0.9"/>
<path d="M741.0 248.0 L866.0 367.0" fill="none" stroke="#5858a8" stroke-width="0.9"/>
<path d="M769.5 248.0 L978.0 267.0" fill="none" stroke="#5858a8" stroke-width="0.9"/>
<path d="M818.0 248.0 L914.0 367.0" fill="none" stroke="#5858a8" stroke-width="0.9"/>
<path d="M693.0 344.0 L811.0 368.0 L1000.0 410.0" fill="none" stroke="#5858a8" stroke-width="0.9"/>
<path d="M811.0 375.5 L760.0 395.0" fill="none" stroke="#5858a8" stroke-width="0.9"/>
<path d="M818.0 329.0 L811.0 367.0" fill="none" stroke="#5858a8" stroke-width="0.9"/>
<path d="M913.8 329.0 L960.5 367.0" fill="none" stroke="#5858a8" stroke-width="0.9"/>
<path d="M970.8 329.0 L973.7 367.0" fill="none" stroke="#5858a8" stroke-width="0.9"/>
<path d="M999.6 329.0 L985.0 400.0" fill="none" stroke="#5858a8" stroke-width="0.9"/>
<path d="M1009.0 375.3 L1039.0 375.3" fill="none" stroke="#5858a8" stroke-width="0.9"/>
<rect x="537.5" y="151.0" width="7" height="7" rx="1" fill="#fff" stroke="#1a1a1a" stroke-width="1.1"/><path d="M539.0 153.0L541.0 156.0L543.0 153.0" fill="none" stroke="#111" stroke-width="1"/>
<rect x="556.0" y="151.0" width="7" height="7" rx="1" fill="#fff" stroke="#1a1a1a" stroke-width="1.1"/><path d="M557.5 153.0L559.5 156.0L561.5 153.0" fill="none" stroke="#111" stroke-width="1"/>
<rect x="627.0" y="151.0" width="7" height="7" rx="1" fill="#fff" stroke="#1a1a1a" stroke-width="1.1"/><path d="M628.5 156.0L630.5 153.0L632.5 156.0" fill="none" stroke="#111" stroke-width="1"/>
<rect x="749.5" y="151.0" width="7" height="7" rx="1" fill="#fff" stroke="#1a1a1a" stroke-width="1.1"/><path d="M751.0 156.0L753.0 153.0L755.0 156.0" fill="none" stroke="#111" stroke-width="1"/>
<rect x="872.5" y="151.0" width="7" height="7" rx="1" fill="#fff" stroke="#1a1a1a" stroke-width="1.1"/><path d="M874.0 153.0L876.0 156.0L878.0 153.0" fill="none" stroke="#111" stroke-width="1"/>
<rect x="364.0" y="217.0" width="7" height="7" rx="1" fill="#fff" stroke="#1a1a1a" stroke-width="1.1"/><path d="M365.5 219.0L367.5 222.0L369.5 219.0" fill="none" stroke="#111" stroke-width="1"/>
<rect x="570.0" y="177.0" width="7" height="7" rx="1" fill="#fff" stroke="#1a1a1a" stroke-width="1.1"/><path d="M571.5 179.0L573.5 182.0L575.5 179.0" fill="none" stroke="#111" stroke-width="1"/>
<rect x="633.5" y="177.0" width="7" height="7" rx="1" fill="#fff" stroke="#1a1a1a" stroke-width="1.1"/><path d="M635.0 182.0L637.0 179.0L639.0 182.0" fill="none" stroke="#111" stroke-width="1"/>
<rect x="711.5" y="177.0" width="7" height="7" rx="1" fill="#fff" stroke="#1a1a1a" stroke-width="1.1"/><path d="M713.0 182.0L715.0 179.0L717.0 182.0" fill="none" stroke="#111" stroke-width="1"/>
<rect x="789.5" y="177.0" width="7" height="7" rx="1" fill="#fff" stroke="#1a1a1a" stroke-width="1.1"/><path d="M791.0 179.0L793.0 182.0L795.0 179.0" fill="none" stroke="#111" stroke-width="1"/>
<rect x="567.5" y="244.2" width="7" height="7" rx="1" fill="#fff" stroke="#1a1a1a" stroke-width="1.1"/><path d="M569.0 249.2L571.0 246.2L573.0 249.2" fill="none" stroke="#111" stroke-width="1"/>
<rect x="600.5" y="244.2" width="7" height="7" rx="1" fill="#fff" stroke="#1a1a1a" stroke-width="1.1"/><path d="M602.0 246.2L604.0 249.2L606.0 246.2" fill="none" stroke="#111" stroke-width="1"/>
<rect x="633.5" y="244.2" width="7" height="7" rx="1" fill="#fff" stroke="#1a1a1a" stroke-width="1.1"/><path d="M635.0 246.2L637.0 249.2L639.0 246.2" fill="none" stroke="#111" stroke-width="1"/>
<rect x="659.5" y="244.2" width="7" height="7" rx="1" fill="#fff" stroke="#1a1a1a" stroke-width="1.1"/><path d="M661.0 249.2L663.0 246.2L665.0 249.2" fill="none" stroke="#111" stroke-width="1"/>
<rect x="737.5" y="244.2" width="7" height="7" rx="1" fill="#fff" stroke="#1a1a1a" stroke-width="1.1"/><path d="M739.0 249.2L741.0 246.2L743.0 249.2" fill="none" stroke="#111" stroke-width="1"/>
<rect x="766.0" y="244.2" width="7" height="7" rx="1" fill="#fff" stroke="#1a1a1a" stroke-width="1.1"/><path d="M767.5 249.2L769.5 246.2L771.5 249.2" fill="none" stroke="#111" stroke-width="1"/>
<rect x="814.5" y="244.2" width="7" height="7" rx="1" fill="#fff" stroke="#1a1a1a" stroke-width="1.1"/><path d="M816.0 249.2L818.0 246.2L820.0 249.2" fill="none" stroke="#111" stroke-width="1"/>
<rect x="364.0" y="263.5" width="7" height="7" rx="1" fill="#fff" stroke="#1a1a1a" stroke-width="1.1"/><path d="M365.5 265.5L367.5 268.5L369.5 265.5" fill="none" stroke="#111" stroke-width="1"/>
<rect x="414.0" y="263.5" width="7" height="7" rx="1" fill="#fff" stroke="#1a1a1a" stroke-width="1.1"/><path d="M415.5 265.5L417.5 268.5L419.5 265.5" fill="none" stroke="#111" stroke-width="1"/>
<rect x="550.5" y="263.5" width="7" height="7" rx="1" fill="#fff" stroke="#1a1a1a" stroke-width="1.1"/><path d="M552.0 268.5L554.0 265.5L556.0 268.5" fill="none" stroke="#111" stroke-width="1"/>
<rect x="672.5" y="263.5" width="7" height="7" rx="1" fill="#fff" stroke="#1a1a1a" stroke-width="1.1"/><path d="M674.0 265.5L676.0 268.5L678.0 265.5" fill="none" stroke="#111" stroke-width="1"/>
<rect x="689.1" y="270.9" width="7" height="7" rx="1" fill="#fff" stroke="#1a1a1a" stroke-width="1.1"/><path d="M694.1 272.4L691.1 274.4L694.1 276.4" fill="none" stroke="#222" stroke-width="0.9"/>
<rect x="689.1" y="340.9" width="7" height="7" rx="1" fill="#fff" stroke="#1a1a1a" stroke-width="1.1"/><path d="M691.1 342.4L694.1 344.4L691.1 346.4" fill="none" stroke="#222" stroke-width="0.9"/>
<rect x="689.1" y="378.3" width="7" height="7" rx="1" fill="#fff" stroke="#1a1a1a" stroke-width="1.1"/><path d="M694.1 379.8L691.1 381.8L694.1 383.8" fill="none" stroke="#222" stroke-width="0.9"/>
<rect x="807.5" y="265.0" width="7" height="7" rx="1" fill="#fff" stroke="#1a1a1a" stroke-width="1.1"/><path d="M812.5 266.5L809.5 268.5L812.5 270.5" fill="none" stroke="#222" stroke-width="0.9"/>
<rect x="974.5" y="264.1" width="7" height="7" rx="1" fill="#fff" stroke="#1a1a1a" stroke-width="1.1"/><path d="M976.0 269.1L978.0 266.1L980.0 269.1" fill="none" stroke="#111" stroke-width="1"/>
<rect x="814.5" y="324.5" width="7" height="7" rx="1" fill="#fff" stroke="#1a1a1a" stroke-width="1.1"/><path d="M816.0 326.5L818.0 329.5L820.0 326.5" fill="none" stroke="#111" stroke-width="1"/>
<rect x="910.3" y="324.5" width="7" height="7" rx="1" fill="#fff" stroke="#1a1a1a" stroke-width="1.1"/><path d="M911.8 329.5L913.8 326.5L915.8 329.5" fill="none" stroke="#111" stroke-width="1"/>
<rect x="967.3" y="324.5" width="7" height="7" rx="1" fill="#fff" stroke="#1a1a1a" stroke-width="1.1"/><path d="M968.8 329.5L970.8 326.5L972.8 329.5" fill="none" stroke="#111" stroke-width="1"/>
<rect x="996.1" y="324.5" width="7" height="7" rx="1" fill="#fff" stroke="#1a1a1a" stroke-width="1.1"/><path d="M997.6 329.5L999.6 326.5L1001.6 329.5" fill="none" stroke="#111" stroke-width="1"/>
<rect x="814.5" y="364.1" width="7" height="7" rx="1" fill="#fff" stroke="#1a1a1a" stroke-width="1.1"/><path d="M816.0 366.1L818.0 369.1L820.0 366.1" fill="none" stroke="#111" stroke-width="1"/>
<rect x="862.3" y="364.1" width="7" height="7" rx="1" fill="#fff" stroke="#1a1a1a" stroke-width="1.1"/><path d="M863.8 369.1L865.8 366.1L867.8 369.1" fill="none" stroke="#111" stroke-width="1"/>
<rect x="910.3" y="364.1" width="7" height="7" rx="1" fill="#fff" stroke="#1a1a1a" stroke-width="1.1"/><path d="M911.8 369.1L913.8 366.1L915.8 369.1" fill="none" stroke="#111" stroke-width="1"/>
<rect x="957.0" y="364.1" width="7" height="7" rx="1" fill="#fff" stroke="#1a1a1a" stroke-width="1.1"/><path d="M958.5 369.1L960.5 366.1L962.5 369.1" fill="none" stroke="#111" stroke-width="1"/>
<rect x="970.2" y="364.1" width="7" height="7" rx="1" fill="#fff" stroke="#1a1a1a" stroke-width="1.1"/><path d="M971.7 369.1L973.7 366.1L975.7 369.1" fill="none" stroke="#111" stroke-width="1"/>
<rect x="807.5" y="372.5" width="7" height="7" rx="1" fill="#fff" stroke="#1a1a1a" stroke-width="1.1"/><path d="M809.5 374.0L812.5 376.0L809.5 378.0" fill="none" stroke="#222" stroke-width="0.9"/>
<rect x="1005.5" y="371.8" width="7" height="7" rx="1" fill="#fff" stroke="#1a1a1a" stroke-width="1.1"/><path d="M1010.5 373.3L1007.5 375.3L1010.5 377.3" fill="none" stroke="#222" stroke-width="0.9"/>
<rect x="1035.5" y="371.8" width="7" height="7" rx="1" fill="#fff" stroke="#1a1a1a" stroke-width="1.1"/><path d="M1040.5 373.3L1037.5 375.3L1040.5 377.3" fill="none" stroke="#222" stroke-width="0.9"/>
<rect x="807.6" y="263.2" width="3.2" height="3.2" fill="#111"/>
<rect x="908.6" y="263.2" width="3.2" height="3.2" fill="#111"/>
<rect x="1009.6" y="263.2" width="3.2" height="3.2" fill="#111"/>
<rect x="807.6" y="295.8" width="3.2" height="3.2" fill="#111"/>
<rect x="1009.6" y="295.8" width="3.2" height="3.2" fill="#111"/>
<rect x="807.6" y="328.4" width="3.2" height="3.2" fill="#111"/>
<rect x="908.6" y="328.4" width="3.2" height="3.2" fill="#111"/>
<rect x="1009.6" y="328.4" width="3.2" height="3.2" fill="#111"/>
<path d="M318.8 241.2H321.0Q323.0 241.2 323.0 244.0Q323.0 246.8 321.0 246.8H318.8Z" fill="#e6f4ff" stroke="#111" stroke-width="1.15"/><path d="M323.0 244.0H325.0" stroke="#2a6a6a" stroke-width="1.4"/><rect x="325.0" y="241.2" width="4.3" height="5.6" fill="#e6f4ff" stroke="#111" stroke-width="1.15"/><text x="332.0" y="246.9" font-family="Liberation Sans" font-size="8.2" fill="#5a4ea8" stroke="#5a4ea8" stroke-width="0.12">Train Schedules service</text>
<path d="M536.8 160.2H539.0Q541.0 160.2 541.0 163.0Q541.0 165.8 539.0 165.8H536.8Z" fill="#e6f4ff" stroke="#111" stroke-width="1.15"/><path d="M541.0 163.0H543.0" stroke="#2a6a6a" stroke-width="1.4"/><rect x="543.0" y="160.2" width="4.3" height="5.6" fill="#e6f4ff" stroke="#111" stroke-width="1.15"/><text x="550.0" y="165.9" font-family="Liberation Sans" font-size="8.2" fill="#5a4ea8" stroke="#5a4ea8" stroke-width="0.12">Emergency stop</text>
<path d="M610.3 165.2H612.5Q614.5 165.2 614.5 168.0Q614.5 170.8 612.5 170.8H610.3Z" fill="#e6f4ff" stroke="#111" stroke-width="1.15"/><path d="M614.5 168.0H616.5" stroke="#2a6a6a" stroke-width="1.4"/><rect x="616.5" y="165.2" width="4.3" height="5.6" fill="#e6f4ff" stroke="#111" stroke-width="1.15"/><text x="623.5" y="170.9" font-family="Liberation Sans" font-size="8.2" fill="#5a4ea8" stroke="#5a4ea8" stroke-width="0.12">Alerts</text>
<path d="M684.8 158.2H687.0Q689.0 158.2 689.0 161.0Q689.0 163.8 687.0 163.8H684.8Z" fill="#e6f4ff" stroke="#111" stroke-width="1.15"/><path d="M689.0 161.0H691.0" stroke="#2a6a6a" stroke-width="1.4"/><rect x="691.0" y="158.2" width="4.3" height="5.6" fill="#e6f4ff" stroke="#111" stroke-width="1.15"/><text x="698.0" y="163.9" font-family="Liberation Sans" font-size="8.2" fill="#5a4ea8" stroke="#5a4ea8" stroke-width="0.12">Operations situation</text>
<path d="M541.8 189.2H544.0Q546.0 189.2 546.0 192.0Q546.0 194.8 544.0 194.8H541.8Z" fill="#e6f4ff" stroke="#111" stroke-width="1.15"/><path d="M546.0 192.0H548.0" stroke="#2a6a6a" stroke-width="1.4"/><rect x="548.0" y="189.2" width="4.3" height="5.6" fill="#e6f4ff" stroke="#111" stroke-width="1.15"/><text x="555.0" y="194.9" font-family="Liberation Sans" font-size="8.2" fill="#5a4ea8" stroke="#5a4ea8" stroke-width="0.12">Emergency stop</text>
<path d="M810.8 181.2H813.0Q815.0 181.2 815.0 184.0Q815.0 186.8 813.0 186.8H810.8Z" fill="#e6f4ff" stroke="#111" stroke-width="1.15"/><path d="M815.0 184.0H817.0" stroke="#2a6a6a" stroke-width="1.4"/><rect x="817.0" y="181.2" width="4.3" height="5.6" fill="#e6f4ff" stroke="#111" stroke-width="1.15"/><text x="824.0" y="186.9" font-family="Liberation Sans" font-size="8.2" fill="#5a4ea8" stroke="#5a4ea8" stroke-width="0.12">Traffic release</text>
<path d="M485.8 227.2H488.0Q490.0 227.2 490.0 230.0Q490.0 232.8 488.0 232.8H485.8Z" fill="#e6f4ff" stroke="#111" stroke-width="1.15"/><path d="M490.0 230.0H492.0" stroke="#2a6a6a" stroke-width="1.4"/><rect x="492.0" y="227.2" width="4.3" height="5.6" fill="#e6f4ff" stroke="#111" stroke-width="1.15"/><text x="499.0" y="232.9" font-family="Liberation Sans" font-size="8.2" fill="#5a4ea8" stroke="#5a4ea8" stroke-width="0.12">Delays notification</text>
<path d="M474.8 257.2H477.0Q479.0 257.2 479.0 260.0Q479.0 262.8 477.0 262.8H474.8Z" fill="#e6f4ff" stroke="#111" stroke-width="1.15"/><path d="M479.0 260.0H481.0" stroke="#2a6a6a" stroke-width="1.4"/><rect x="481.0" y="257.2" width="4.3" height="5.6" fill="#e6f4ff" stroke="#111" stroke-width="1.15"/><text x="488.0" y="262.9" font-family="Liberation Sans" font-size="8.2" fill="#5a4ea8" stroke="#5a4ea8" stroke-width="0.12">Emergency stop</text>
<path d="M611.8 252.2H614.0Q616.0 252.2 616.0 255.0Q616.0 257.8 614.0 257.8H611.8Z" fill="#e6f4ff" stroke="#111" stroke-width="1.15"/><path d="M616.0 255.0H618.0" stroke="#2a6a6a" stroke-width="1.4"/><rect x="618.0" y="252.2" width="4.3" height="5.6" fill="#e6f4ff" stroke="#111" stroke-width="1.15"/><text x="625.0" y="257.9" font-family="Liberation Sans" font-size="8.2" fill="#5a4ea8" stroke="#5a4ea8" stroke-width="0.12">Traffic release</text>
<path d="M681.8 296.7H684.0Q686.0 296.7 686.0 299.5Q686.0 302.3 684.0 302.3H681.8Z" fill="#e6f4ff" stroke="#111" stroke-width="1.15"/><path d="M686.0 299.5H688.0" stroke="#2a6a6a" stroke-width="1.4"/><rect x="688.0" y="296.7" width="4.3" height="5.6" fill="#e6f4ff" stroke="#111" stroke-width="1.15"/><text x="695.0" y="302.4" font-family="Liberation Sans" font-size="8.2" fill="#5a4ea8" stroke="#5a4ea8" stroke-width="0.12">Traffic release</text>
<path d="M714.8 252.2H717.0Q719.0 252.2 719.0 255.0Q719.0 257.8 717.0 257.8H714.8Z" fill="#e6f4ff" stroke="#111" stroke-width="1.15"/><path d="M719.0 255.0H721.0" stroke="#2a6a6a" stroke-width="1.4"/><rect x="721.0" y="252.2" width="4.3" height="5.6" fill="#e6f4ff" stroke="#111" stroke-width="1.15"/><text x="728.0" y="257.9" font-family="Liberation Sans" font-size="8.2" fill="#5a4ea8" stroke="#5a4ea8" stroke-width="0.12">Vehicle on track</text>
<path d="M884.8 251.7H887.0Q889.0 251.7 889.0 254.5Q889.0 257.3 887.0 257.3H884.8Z" fill="#e6f4ff" stroke="#111" stroke-width="1.15"/><path d="M889.0 254.5H891.0" stroke="#2a6a6a" stroke-width="1.4"/><rect x="891.0" y="251.7" width="4.3" height="5.6" fill="#e6f4ff" stroke="#111" stroke-width="1.15"/><text x="898.0" y="257.4" font-family="Liberation Sans" font-size="8.2" fill="#5a4ea8" stroke="#5a4ea8" stroke-width="0.12">Crritical failure</text>
<path d="M709.8 274.4H712.0Q714.0 274.4 714.0 277.2Q714.0 280.0 712.0 280.0H709.8Z" fill="#e6f4ff" stroke="#111" stroke-width="1.15"/><path d="M714.0 277.2H716.0" stroke="#2a6a6a" stroke-width="1.4"/><rect x="716.0" y="274.4" width="4.3" height="5.6" fill="#e6f4ff" stroke="#111" stroke-width="1.15"/><text x="723.0" y="280.1" font-family="Liberation Sans" font-size="8.2" fill="#5a4ea8" stroke="#5a4ea8" stroke-width="0.12">Vehicle on the track</text>
<path d="M755.8 289.2H758.0Q760.0 289.2 760.0 292.0Q760.0 294.8 758.0 294.8H755.8Z" fill="#e6f4ff" stroke="#111" stroke-width="1.15"/><path d="M760.0 292.0H762.0" stroke="#2a6a6a" stroke-width="1.4"/><rect x="762.0" y="289.2" width="4.3" height="5.6" fill="#e6f4ff" stroke="#111" stroke-width="1.15"/><text x="769.0" y="294.9" font-family="Liberation Sans" font-size="8.2" fill="#5a4ea8" stroke="#5a4ea8" stroke-width="0.12">Conflict situation</text>
<path d="M818.8 331.2H821.0Q823.0 331.2 823.0 334.0Q823.0 336.8 821.0 336.8H818.8Z" fill="#e6f4ff" stroke="#111" stroke-width="1.15"/><path d="M823.0 334.0H825.0" stroke="#2a6a6a" stroke-width="1.4"/><rect x="825.0" y="331.2" width="4.3" height="5.6" fill="#e6f4ff" stroke="#111" stroke-width="1.15"/><text x="832.0" y="336.9" font-family="Liberation Sans" font-size="8.2" fill="#5a4ea8" stroke="#5a4ea8" stroke-width="0.12">Situation of operations</text>
<path d="M907.8 339.2H910.0Q912.0 339.2 912.0 342.0Q912.0 344.8 910.0 344.8H907.8Z" fill="#e6f4ff" stroke="#111" stroke-width="1.15"/><path d="M912.0 342.0H914.0" stroke="#2a6a6a" stroke-width="1.4"/><rect x="914.0" y="339.2" width="4.3" height="5.6" fill="#e6f4ff" stroke="#111" stroke-width="1.15"/><text x="921.0" y="344.9" font-family="Liberation Sans" font-size="8.2" fill="#5a4ea8" stroke="#5a4ea8" stroke-width="0.12">Vehicule sur la voie</text>
<path d="M868.8 350.2H871.0Q873.0 350.2 873.0 353.0Q873.0 355.8 871.0 355.8H868.8Z" fill="#e6f4ff" stroke="#111" stroke-width="1.15"/><path d="M873.0 353.0H875.0" stroke="#2a6a6a" stroke-width="1.4"/><rect x="875.0" y="350.2" width="4.3" height="5.6" fill="#e6f4ff" stroke="#111" stroke-width="1.15"/><text x="882.0" y="355.9" font-family="Liberation Sans" font-size="8.2" fill="#5a4ea8" stroke="#5a4ea8" stroke-width="0.12">System operating configuration</text>
<path d="M709.8 358.2H712.0Q714.0 358.2 714.0 361.0Q714.0 363.8 712.0 363.8H709.8Z" fill="#e6f4ff" stroke="#111" stroke-width="1.15"/><path d="M714.0 361.0H716.0" stroke="#2a6a6a" stroke-width="1.4"/><rect x="716.0" y="358.2" width="4.3" height="5.6" fill="#e6f4ff" stroke="#111" stroke-width="1.15"/><text x="723.0" y="363.9" font-family="Liberation Sans" font-size="8.2" fill="#5a4ea8" stroke="#5a4ea8" stroke-width="0.12">Vehicle commands</text>
<path d="M998.8 363.2H1001.0Q1003.0 363.2 1003.0 366.0Q1003.0 368.8 1001.0 368.8H998.8Z" fill="#e6f4ff" stroke="#111" stroke-width="1.15"/><path d="M1003.0 366.0H1005.0" stroke="#2a6a6a" stroke-width="1.4"/><rect x="1005.0" y="363.2" width="4.3" height="5.6" fill="#e6f4ff" stroke="#111" stroke-width="1.15"/><text x="1012.0" y="368.9" font-family="Liberation Sans" font-size="8.2" fill="#5a4ea8" stroke="#5a4ea8" stroke-width="0.12">Barriers statuses</text>
</svg>
<div class="a" style="left:1104px;top:86px;width:13px;height:302px;background:#f0f0f0"></div>
<div class="a" style="left:1104px;top:98.5px;width:10.5px;height:101px;background:#cdcdcd"></div>
<svg class="a" style="left:1106px;top:89px" width="8" height="6" viewBox="0 0 8 6"><path d="M0.8 5L4 1.5L7.2 5" fill="none" stroke="#333" stroke-width="1.3"/></svg>
<svg class="a" style="left:1106px;top:378px" width="8" height="6" viewBox="0 0 8 6"><path d="M0.8 1L4 4.5L7.2 1" fill="none" stroke="#333" stroke-width="1.3"/></svg>
<div class="a" style="left:283px;top:388px;width:834px;height:11px;background:#f0f0f0"></div>
<div class="a" style="left:295px;top:388px;width:489px;height:10.5px;background:#cdcdcd"></div>
<svg class="a" style="left:286px;top:390px" width="6" height="8" viewBox="0 0 6 8"><path d="M4.5 0.8L1.2 4L4.5 7.2" fill="none" stroke="#333" stroke-width="1.3"/></svg>
<svg class="a" style="left:1094px;top:390px" width="6" height="8" viewBox="0 0 6 8"><path d="M1.5 0.8L4.8 4L1.5 7.2" fill="none" stroke="#333" stroke-width="1.3"/></svg>
<!-- palette -->
<div class="a" style="left:1117px;top:70px;width:263px;height:330px;background:#fff;border-left:1px solid #a9a9a9;border-right:1px solid #d0d0d0"></div>
<div class="a" style="left:1118px;top:70px;width:262px;height:16px;background:linear-gradient(#ffffff,#f4f4f4);border-bottom:1px solid #b4b4b4"></div>
<svg class="a" style="left:1120px;top:72px" width="12" height="12" viewBox="0 0 12 12"><circle cx="6" cy="6" r="5.5" fill="#eef4fc" stroke="#c8d8f0" stroke-width="0.6"/><circle cx="4.5" cy="2.8" r="1.1" fill="#f0a020"/><circle cx="7.5" cy="2.8" r="1.1" fill="#40b040"/><circle cx="2.6" cy="6" r="1.1" fill="#f07020"/><circle cx="9.4" cy="6" r="1.1" fill="#20a020"/><circle cx="4.5" cy="9.2" r="1.1" fill="#e04040"/><circle cx="7.5" cy="9.2" r="1.1" fill="#3070e0"/></svg>
<div class="t" style="left:1133.8px;top:73px">Palette</div>
<svg class="a" style="left:1366px;top:73px" width="8" height="10" viewBox="0 0 8 10"><path d="M1 1L6.5 5L1 9Z" fill="#fff" stroke="#888" stroke-width="0.9"/></svg>
<div class="a" style="left:1118px;top:87px;width:262px;height:17px;background:#f0f0f0;border-bottom:1px solid #a8a8a8"></div>
<svg class="a" style="left:1118px;top:87px" width="100" height="16" viewBox="1118 87 100 16"><rect x="1119.5" y="88.5" width="12.5" height="12.5" fill="#f4f4f4" stroke="#b8b8b8" stroke-width="0.8"/><path d="M1120.5 89V101" stroke="#888"/><path d="M1123 90L1130 96.5L1126.5 96.5L1128 100L1126.5 100.8L1125 97.2L1123 99Z" fill="#fff8d0" stroke="#777" stroke-width="0.7"/><circle cx="1139" cy="93.5" r="3.3" fill="#fff" stroke="#998040" stroke-width="0.9"/><path d="M1141.5 96L1144 98.5" stroke="#664020" stroke-width="1.3"/><circle cx="1139" cy="93.5" r="1.4" fill="#3050c0"/><circle cx="1152.5" cy="93.5" r="3.3" fill="#fff" stroke="#998040" stroke-width="0.9"/><path d="M1155 96L1157.5 98.5" stroke="#664020" stroke-width="1.3"/><path d="M1151 93.5H1154" stroke="#3050c0" stroke-width="1.1"/><path d="M1161.5 91.5H1172.5V97L1170 99.5H1161.5Z" fill="#f8e860" stroke="#d0b030" stroke-width="0.8"/><path d="M1176 94H1181L1178.5 96.5Z" fill="#111"/><path d="M1183 89L1192 98.5" stroke="#203090" stroke-width="1.1"/><path d="M1193 88.5L1194.5 90L1193 91.5L1191.5 90Z" fill="#fff" stroke="#e0a020" stroke-width="0.7"/><rect x="1197.5" y="93.5" width="9" height="7" fill="#f0f6ff" stroke="#7090c0" stroke-width="0.8"/><path d="M1202 95L1206 90" stroke="#309040" stroke-width="1.8"/><path d="M1210 94H1215L1212.5 96.5Z" fill="#111"/></svg>
<div class="a" style="left:1118px;top:104.5px;width:262px;height:14.5px;background:#efefef"></div>
<svg class="a" style="left:1120px;top:106px" width="12" height="10" viewBox="0 0 12 10"><path d="M0.5 1.5H4L5 2.5H9V4.5" fill="#f5d79a" stroke="#c08a30" stroke-width="0.8"/><path d="M0.5 1.5V9.5H9.5L11.5 4.5H2.5L0.5 9.5" fill="#f8dca0" stroke="#c08a30" stroke-width="0.8"/></svg>
<div class="t" style="left:1133px;top:105.5px">Node Components</div>
<svg class="a" style="left:1369px;top:108px" width="10" height="7" viewBox="0 0 10 7"><path d="M0.7 3.5L3.2 1V2.3H6.5Q8.8 2.3 8.8 3.5Q8.8 4.7 6.5 4.7H3.2V6Z" fill="#fff" stroke="#444" stroke-width="0.8"/><path d="M6.5 2.3V4.7" stroke="#444" stroke-width="0.7"/></svg>
<div class="a" style="left:1118px;top:119px;width:262px;height:74px;overflow:hidden">
<div class="a" style="left:-1118px;top:-119px;width:1380px;height:300px">
<svg class="a" style="left:1122.5px;top:126.6px" width="4" height="6" viewBox="0 0 4 6"><path d="M0.5 0.5L3.5 3L0.5 5.5Z" fill="#555"/></svg><div class="ico" style="left:1128.5px;top:123.1px;line-height:0"><svg width="12" height="11" viewBox="0 0 12 11"><path d="M1 1.5L0 3L1 4.5L0 6L1 7.5L0 9" fill="none" stroke="#222" stroke-width="0.8"/><rect x="2.5" y="0.5" width="9" height="10" rx="1" fill="#f8f040" stroke="#222" stroke-width="1"/><text x="4" y="8.5" font-size="8" font-family="Liberation Sans" font-weight="bold" fill="#222">P</text></svg></div><div class="t" style="left:1143px;top:122.6px">Node PC</div>
<svg class="a" style="left:1122.5px;top:143.0px" width="4" height="6" viewBox="0 0 4 6"><path d="M0.5 0.5L3.5 3L0.5 5.5Z" fill="#555"/></svg><div class="ico" style="left:1128.5px;top:139.5px;line-height:0"><svg width="12" height="11" viewBox="0 0 12 11"><path d="M1 1.5L0 3L1 4.5L0 6L1 7.5L0 9" fill="none" stroke="#222" stroke-width="0.8"/><rect x="2.5" y="0.5" width="9" height="10" rx="1" fill="#a0e0f0" stroke="#222" stroke-width="1"/><text x="3" y="8" font-size="6" font-family="Liberation Sans" font-weight="bold" fill="#222" letter-spacing="-0.6">PA</text></svg></div><div class="t" style="left:1143px;top:139.0px">Physical Actor</div>
<div class="ico" style="left:1128.5px;top:156.1px;line-height:0"><svg width="12" height="9" viewBox="0 0 12 9"><rect x="0.5" y="1" width="3" height="7" fill="#f8f040" stroke="#222" stroke-width="1"/><rect x="8.5" y="1" width="3" height="7" fill="#f8f040" stroke="#222" stroke-width="1"/><path d="M3.5 4.5H8.5" stroke="#e02020" stroke-width="2"/></svg></div><div class="t" style="left:1143px;top:155.6px">Physical Link</div>
<div class="ico" style="left:1128.5px;top:172.5px;line-height:0"><svg width="11" height="11" viewBox="0 0 11 11"><rect x="0.5" y="0.5" width="10" height="10" fill="#fce8a8" stroke="#333" stroke-width="0.9"/></svg></div><div class="t" style="left:1143px;top:172.0px">Physical Port</div>
<div class="ico" style="left:1128.5px;top:188.9px;line-height:0"><svg width="8" height="6" viewBox="0 0 8 6"><path d="M4 0L1 6H7Z" fill="#444"/></svg></div><div class="t" style="left:1143px;top:188.4px">Component Port All</div>
</div></div>
<div class="a" style="left:1221px;top:188px;width:55px;height:5px;background:#a8a8a8"></div>
<svg class="a" style="left:1245px;top:188px" width="6" height="4" viewBox="0 0 6 4"><path d="M0.5 0.5L3 3L5.5 0.5" fill="none" stroke="#333" stroke-width="0.9"/></svg>
<div class="a" style="left:1118px;top:193.4px;width:262px;height:16px;background:linear-gradient(#f7f7f7,#e6e6e6 60%,#d2d2d2);border-top:1px solid #a8a8a8"></div>
<svg class="a" style="left:1120px;top:196px" width="12" height="10" viewBox="0 0 12 10"><path d="M0.5 1.5H4L5 2.5H9V4.5" fill="#f5d79a" stroke="#c08a30" stroke-width="0.8"/><path d="M0.5 1.5V9.5H9.5L11.5 4.5H2.5L0.5 9.5" fill="#f8dca0" stroke="#c08a30" stroke-width="0.8"/></svg>
<div class="t" style="left:1133px;top:195.7px">Behaviour Components</div>
<div class="a" style="left:1118px;top:209.4px;width:262px;height:16px;background:linear-gradient(#f7f7f7,#e6e6e6 60%,#d2d2d2);border-top:1px solid #a8a8a8"></div>
<svg class="a" style="left:1120px;top:212px" width="12" height="10" viewBox="0 0 12 10"><path d="M0.5 1.5H4L5 2.5H9V4.5" fill="#f5d79a" stroke="#c08a30" stroke-width="0.8"/><path d="M0.5 1.5V9.5H9.5L11.5 4.5H2.5L0.5 9.5" fill="#f8dca0" stroke="#c08a30" stroke-width="0.8"/></svg>
<div class="t" style="left:1133px;top:211.7px">Functions</div>
<div class="a" style="left:1118px;top:225.4px;width:262px;height:16px;background:linear-gradient(#f7f7f7,#e6e6e6 60%,#d2d2d2);border-top:1px solid #a8a8a8"></div>
<svg class="a" style="left:1120px;top:228px" width="12" height="10" viewBox="0 0 12 10"><path d="M0.5 1.5H4L5 2.5H9V4.5" fill="#f5d79a" stroke="#c08a30" stroke-width="0.8"/><path d="M0.5 1.5V9.5H9.5L11.5 4.5H2.5L0.5 9.5" fill="#f8dca0" stroke="#c08a30" stroke-width="0.8"/></svg>
<div class="t" style="left:1133px;top:227.7px">Accelerators</div>
<div class="a" style="left:1118px;top:241.3px;width:262px;height:15.7px;background:#efefef;border-top:1px solid #a8a8a8"></div>
<svg class="a" style="left:1120px;top:244px" width="12" height="10" viewBox="0 0 12 10"><path d="M0.5 1.5H4L5 2.5H9V4.5" fill="#f5d79a" stroke="#c08a30" stroke-width="0.8"/><path d="M0.5 1.5V9.5H9.5L11.5 4.5H2.5L0.5 9.5" fill="#f8dca0" stroke="#c08a30" stroke-width="0.8"/></svg>
<div class="t" style="left:1133px;top:243.5px">Common</div>
<svg class="a" style="left:1369px;top:246px" width="10" height="7" viewBox="0 0 10 7"><path d="M0.7 3.5L3.2 1V2.3H6.5Q8.8 2.3 8.8 3.5Q8.8 4.7 6.5 4.7H3.2V6Z" fill="#fff" stroke="#444" stroke-width="0.8"/><path d="M6.5 2.3V4.7" stroke="#444" stroke-width="0.7"/></svg>
<div class="a" style="left:1118px;top:257px;width:262px;height:74px;overflow:hidden">
<div class="a" style="left:-1118px;top:-257px;width:1380px;height:400px">
<div class="ico" style="left:1128.5px;top:260.0px;line-height:0"><svg width="12" height="10" viewBox="0 0 12 10"><text x="0" y="8.5" font-size="9" font-family="Liberation Sans" fill="#222" letter-spacing="-0.4">{c}</text></svg></div><div class="t" style="left:1143px;top:259.5px">Constraint</div>
<div class="ico" style="left:1128.5px;top:276.7px;line-height:0"><svg width="12" height="8" viewBox="0 0 12 8"><path d="M0 4H10.5" stroke="#666" stroke-width="0.9"/><path d="M7.5 1L10.8 4L7.5 7" fill="none" stroke="#111" stroke-width="1.1"/></svg></div><div class="t" style="left:1143px;top:276.2px">ConstraintElement</div>
<div class="ico" style="left:1128.5px;top:293.2px;line-height:0"><svg width="11" height="10" viewBox="0 0 11 10"><path d="M1 0.5L10 9.5" stroke="#2050a0" stroke-width="1.3"/><ellipse cx="5.5" cy="5" rx="3" ry="2.2" fill="none" stroke="#4a7ab8" stroke-width="1"/></svg></div><div class="t" style="left:1143px;top:292.7px">Constraints</div>
<svg class="a" style="left:1122.5px;top:313.5px" width="4" height="6" viewBox="0 0 4 6"><path d="M0.5 0.5L3.5 3L0.5 5.5Z" fill="#555"/></svg><div class="ico" style="left:1128.5px;top:310.0px;line-height:0"><svg width="11" height="10" viewBox="0 0 11 10"><path d="M1 0.5L10 9.5" stroke="#2050a0" stroke-width="1.3"/><ellipse cx="5.5" cy="5" rx="3" ry="2.2" fill="none" stroke="#4a7ab8" stroke-width="1"/></svg></div><div class="t" style="left:1143px;top:309.5px">Applied Property Values</div>
<div class="ico" style="left:1128.5px;top:326.4px;line-height:0"><svg width="12" height="6" viewBox="0 0 12 6"><rect x="0.5" y="0.5" width="10" height="6" fill="#fff" stroke="#5060b0" stroke-width="0.9"/><path d="M0.5 3H10.5M4 0.5V6M7 0.5V6" stroke="#5060b0" stroke-width="0.8"/></svg></div><div class="t" style="left:1143px;top:325.9px">Title Block</div>
</div></div>
<div class="a" style="left:1221px;top:326px;width:55px;height:5px;background:#a8a8a8"></div>
<svg class="a" style="left:1245px;top:326px" width="6" height="4" viewBox="0 0 6 4"><path d="M0.5 0.5L3 3L5.5 0.5" fill="none" stroke="#333" stroke-width="0.9"/></svg>
<div class="a" style="left:1118px;top:331.2px;width:262px;height:15.8px;background:#efefef;border-top:1px solid #a8a8a8"></div>
<svg class="a" style="left:1120px;top:334px" width="12" height="10" viewBox="0 0 12 10"><path d="M0.5 1.5H4L5 2.5H9V4.5" fill="#f5d79a" stroke="#c08a30" stroke-width="0.8"/><path d="M0.5 1.5V9.5H9.5L11.5 4.5H2.5L0.5 9.5" fill="#f8dca0" stroke="#c08a30" stroke-width="0.8"/></svg>
<div class="t" style="left:1133px;top:333.5px">Requirements</div>
<svg class="a" style="left:1369px;top:336px" width="10" height="7" viewBox="0 0 10 7"><path d="M0.7 3.5L3.2 1V2.3H6.5Q8.8 2.3 8.8 3.5Q8.8 4.7 6.5 4.7H3.2V6Z" fill="#fff" stroke="#444" stroke-width="0.8"/><path d="M6.5 2.3V4.7" stroke="#444" stroke-width="0.7"/></svg>
<div class="ico" style="left:1128.5px;top:350.5px;line-height:0"><svg width="11" height="10" viewBox="0 0 11 10"><path d="M1 0.5L10 9.5" stroke="#2050a0" stroke-width="1.3"/><ellipse cx="5.5" cy="5" rx="3" ry="2.2" fill="none" stroke="#4a7ab8" stroke-width="1"/></svg></div><div class="t" style="left:1143px;top:350.0px">Requirements</div>
<div class="ico" style="left:1128.5px;top:367.2px;line-height:0"><svg width="12" height="10" viewBox="0 0 12 10"><path d="M0 5.5H10.5" stroke="#333" stroke-width="0.9" stroke-dasharray="1.2 1"/><path d="M7.5 2.5L10.8 5.5L7.5 8.5" fill="none" stroke="#111" stroke-width="1.1"/></svg></div><div class="t" style="left:1143px;top:366.7px">Requirement Link</div>
<svg class="a" style="left:1122.5px;top:387.0px" width="4" height="6" viewBox="0 0 4 6"><path d="M0.5 0.5L3.5 3L0.5 5.5Z" fill="#555"/></svg><div class="ico" style="left:1128.5px;top:383.5px;line-height:0"><svg width="11" height="10" viewBox="0 0 11 10"><path d="M1 0.5L10 9.5" stroke="#2050a0" stroke-width="1.3"/><ellipse cx="5.5" cy="5" rx="3" ry="2.2" fill="none" stroke="#4a7ab8" stroke-width="1"/></svg></div><div class="t" style="left:1143px;top:383.0px">All Linked Requirements</div>
<div class="a" style="left:1117px;top:344.4px;width:130.5px;height:58.5px;border:3px solid #e01020"></div>
<!-- bottom panel -->
<div class="a" style="left:281.5px;top:403px;width:1098.5px;height:354px;background:#fff;border:1px solid #d6d6d6"></div>
<div class="a" style="left:282.5px;top:404px;width:1096.5px;height:17.5px;background:#f0f0f0;border-bottom:1px solid #dedede"></div>
<div class="a" style="left:497px;top:404px;width:110px;height:18px;background:#fdfdfd;border-left:1px solid #e2e2e2;border-right:1px solid #e2e2e2"></div>
<div class="ico" style="left:285.7px;top:407px;line-height:0"><svg width="11" height="10" viewBox="0 0 11 10"><path d="M0.5 1.5H10.5" stroke="#8a80c8" stroke-width="1.4"/><path d="M3 4L1 6.5L3 9M8 4L10 6.5L8 9" fill="none" stroke="#222" stroke-width="1.1"/><circle cx="5.5" cy="6.5" r="1" fill="#8a80c8"/></svg></div>
<div class="t" style="left:299.8px;top:406.5px">Properties</div>
<div class="ico" style="left:345.4px;top:407px;line-height:0"><svg width="11" height="11" viewBox="0 0 11 11"><rect x="0.5" y="0.5" width="2.5" height="10" fill="#b8b0e8" stroke="#6a60b0" stroke-width="0.6"/><path d="M4.5 2H10.5M4.5 5.5H10.5M4.5 9H10.5" stroke="#6a60b0" stroke-width="1.2"/></svg></div>
<div class="t" style="left:359.0px;top:406.5px">Information</div>
<div class="ico" style="left:410.7px;top:407px;line-height:0"><svg width="12" height="11" viewBox="0 0 12 11"><path d="M1 1H5V4H1ZM7 6H11V10H7Z" fill="#d0c8f0" stroke="#5a50a0" stroke-width="0.8"/><path d="M5 2.5H8V6M4 4V8H7" fill="none" stroke="#5a50a0" stroke-width="0.8"/></svg></div>
<div class="t" style="left:425.0px;top:406.5px">Semantic Browser</div>
<div class="ico" style="left:500.0px;top:407px;line-height:0"><svg width="12" height="12" viewBox="0 0 12 12"><rect x="0.5" y="2.5" width="9" height="8" fill="#fff" stroke="#2060b0" stroke-width="0.9"/><path d="M7 0.5L11 3L7 5.5Z" fill="#30b030"/><rect x="5" y="7" width="5" height="4.5" fill="#e02020"/></svg></div>
<div class="t" style="left:514.4px;top:406.5px">Viewpoint Manager</div>
<div class="ico" style="left:610.0px;top:407px;line-height:0"><svg width="12" height="12" viewBox="0 0 12 12"><rect x="1.5" y="1.5" width="9.5" height="8" fill="#eef4ff" stroke="#2060b0" stroke-width="0.9"/><path d="M1.5 1.5L0.5 3V11H9.5" fill="none" stroke="#2060b0" stroke-width="0.9"/><circle cx="4" cy="9.5" r="1.8" fill="#2040a0"/></svg></div>
<div class="t" style="left:624.4px;top:406.5px">Capella Requirements</div>
<svg class="a" style="left:593px;top:408.5px" width="8" height="8" viewBox="0 0 8 8"><path d="M1 1L7 7M7 1L1 7" stroke="#777" stroke-width="1.6"/><path d="M1 1L7 7M7 1L1 7" stroke="#fff" stroke-width="0.5"/></svg>
<svg class="a" style="left:1307px;top:406px" width="70" height="12" viewBox="1307 406 70 12"><path d="M1309 411C1309 408 1313 407 1315 409L1316 408V411H1313L1314.5 410C1313 409 1311 410 1311 411Z" fill="#f0b030" stroke="#b07010" stroke-width="0.5"/><path d="M1319 413C1319 416 1315 417 1313 415L1312 416V413H1315L1313.5 414C1315 415 1317 414 1317 413Z" fill="#f0b030" stroke="#b07010" stroke-width="0.5"/><path d="M1323.5 407V417" stroke="#999"/><rect x="1329.5" y="408.5" width="8" height="6" fill="#fff" stroke="#5080c0" stroke-width="0.8"/><rect x="1332" y="411" width="7" height="5" fill="#6090d0"/><rect x="1347.5" y="409.5" width="7" height="2.5" fill="#fff" stroke="#555" stroke-width="0.9"/><rect x="1365" y="408.5" width="7" height="7" fill="#fff" stroke="#555" stroke-width="0.9"/><path d="M1365 410H1372" stroke="#555"/></svg>
<div class="t" style="left:295.3px;top:423px">Project Level Crossing Traffic Control</div>
<div class="a" style="left:285px;top:436px;width:1091.5px;height:317.5px;background:#fff;border:1px solid #828790"></div>
<div class="a" style="left:286.5px;top:455px;width:604.5px;height:297.5px;background:#f6f6f6"></div>
<div class="a" style="left:891px;top:438px;width:1px;height:17px;background:#e5e5e5"></div>
<div class="a" style="left:1253px;top:438px;width:1px;height:17px;background:#e5e5e5"></div>
<div class="a" style="left:891px;top:455px;width:1px;height:297.5px;background:#e3ecf7"></div>
<div class="a" style="left:1253px;top:455px;width:1px;height:297.5px;background:#eef3fa"></div>
<svg class="a" style="left:586px;top:437px" width="7" height="4" viewBox="0 0 7 4"><path d="M0.5 0.5L3.5 3.5L6.5 0.5" fill="none" stroke="#999" stroke-width="0.8"/></svg>
<div class="t" style="left:291.3px;top:440px">Name</div>
<div class="t" style="left:896.2px;top:440px">Version</div>
<div class="t" style="left:1258.4px;top:440px">State</div>
<div class="a" style="left:287px;top:455px;width:1087.5px;height:12.5px;background:#cce8ff;border:1px solid #8c9cb0;border-left:1px solid #99d1ff;border-right:1px solid #99d1ff"></div>
<div class="ico" style="left:289px;top:456px;line-height:0"><svg width="12" height="12" viewBox="0 0 12 12"><rect x="1.5" y="2.5" width="9.5" height="8" fill="#eef4ff" stroke="#2060b0" stroke-width="0.9"/><path d="M7 0.5L11 3L7 5.5Z" fill="#30b030"/><circle cx="4" cy="9.5" r="1.8" fill="#2040a0"/></svg></div>
<div class="t" style="left:302.8px;top:455.5px">Capella Requirements</div>
<div class="t" style="left:896.2px;top:455.5px">0.13.1</div>
<div class="t" style="left:1258.4px;top:455.5px">Active</div>
<div class="ico" style="left:289px;top:469.5px;line-height:0"><svg width="12" height="12" viewBox="0 0 12 12"><rect x="1.5" y="1.5" width="9.5" height="8" fill="#eef4ff" stroke="#2060b0" stroke-width="0.9"/><path d="M1.5 1.5L0.5 3V11H9.5" fill="none" stroke="#2060b0" stroke-width="0.9"/><circle cx="4" cy="9.5" r="1.8" fill="#2040a0"/></svg></div>
<div class="t" style="left:302.8px;top:469.5px">ms</div>
<div class="t" style="left:896.2px;top:469.5px">0.19.0.qualifier</div>
<div class="t" style="left:1258.4px;top:469.5px">Unreferenced</div>
<div class="a" style="left:389px;top:463px;width:101px;height:93px;background:#f0f0f0;border:1px solid #c8c8c8;box-shadow:2px 2px 2px rgba(0,0,0,0.25)"></div>
<svg class="a" style="left:393px;top:466px" width="12" height="12" viewBox="0 0 12 12"><circle cx="4.5" cy="4.5" r="3.3" fill="none" stroke="#b8b8b8" stroke-width="1.2"/><path d="M7 7L11 11" stroke="#b8b8b8" stroke-width="1.6"/></svg>
<div class="t" style="left:413.9px;top:466px;color:#8d8d8d">Reference</div>
<svg class="a" style="left:393px;top:482px" width="12" height="12" viewBox="0 0 12 12"><rect x="0.5" y="0.5" width="6" height="6" fill="#e03030"/><path d="M6 6L11 11M11 6L6 11" stroke="#333" stroke-width="1.5"/></svg>
<div class="t" style="left:413.9px;top:482px">Unreference</div>
<div class="a" style="left:411px;top:498.5px;width:76px;height:1px;background:#d7d7d7"></div>
<svg class="a" style="left:395px;top:504px" width="8" height="9" viewBox="0 0 8 9"><path d="M0.5 0.5L7 4.5L0.5 8.5Z" fill="#c8c8c8"/></svg>
<div class="t" style="left:413.9px;top:503px;color:#8d8d8d">Activate</div>
<div class="a" style="left:391px;top:517.8px;width:96px;height:14.6px;background:#91c9f7"></div>
<svg class="a" style="left:393px;top:519.5px" width="12" height="11" viewBox="0 0 12 11"><rect x="1.5" y="0.5" width="3.5" height="10" fill="#f8e080" stroke="#c09030" stroke-width="0.9"/><rect x="6.5" y="0.5" width="3.5" height="10" fill="#f8e080" stroke="#c09030" stroke-width="0.9"/></svg>
<div class="t" style="left:413.9px;top:519px">Desactivate</div>
<div class="a" style="left:411px;top:535.5px;width:76px;height:1px;background:#d7d7d7"></div>
<svg class="a" style="left:393px;top:540px" width="12" height="12" viewBox="0 0 12 12"><rect x="1.5" y="1.5" width="9.5" height="8" fill="#eef4ff" stroke="#2060b0" stroke-width="0.9"/><path d="M1.5 1.5L0.5 3V11H9.5" fill="none" stroke="#2060b0" stroke-width="0.9"/><circle cx="4" cy="9.5" r="1.8" fill="#2040a0"/></svg>
<div class="t" style="left:413.9px;top:539.5px">Show view</div>
<div class="a" style="left:453.5px;top:541.5px;width:106px;height:14.5px;background:#fff;border:1px solid #767676"></div>
<div class="t" style="left:457.5px;top:542.5px">Desactiavte the viewpoint</div>
<div class="a" style="left:379px;top:514px;width:193.5px;height:47.5px;border:3px solid #e01020"></div>
<!-- status bar -->
<div class="a" style="left:0;top:757px;width:1380px;height:16.5px;background:#f0f0f0"></div>
<div class="a" style="left:0;top:773px;width:1380px;height:1px;background:#fafafa"></div>
<div class="a" style="left:0;top:774.2px;width:1380px;height:1.8px;background:#1a1a1a"></div>
<div class="a" style="left:1019.5px;top:760px;width:1px;height:12px;border-left:1px dotted #999"></div>
<div class="a" style="left:1022.4px;top:759px;width:92.6px;height:14px;background:#fff;border:1px solid #e0e0e0"></div>
<div class="a" style="left:1022.4px;top:759px;width:62px;height:14px;background:#a8a8a8"></div>
<div class="t" style="left:1040.9px;top:760px">665M of 1000M</div>
<svg class="a" style="left:1116px;top:760px" width="11" height="12" viewBox="0 0 11 12"><rect x="1" y="1" width="9" height="1.6" fill="#5a8ad0"/><path d="M2 3H9L8.3 11.5H2.7Z" fill="#a8c8f0" stroke="#4a7ac0" stroke-width="0.8"/><path d="M4 4.5V10M5.5 4.5V10M7 4.5V10" stroke="#4a7ac0" stroke-width="0.6"/></svg>
<div class="a" style="left:1129px;top:760px;width:1px;height:12px;border-left:1px dotted #999"></div>
<div class="a" style="left:1334.5px;top:760px;width:1px;height:12px;border-left:1px dotted #999"></div>
<svg class="a" style="left:1342px;top:760px" width="14" height="12" viewBox="0 0 14 12"><path d="M1 4L4 1.5V3H8V5H4V6.5Z" fill="#fff" stroke="#777" stroke-width="0.7"/><rect x="7" y="4.5" width="6" height="6" rx="1.5" fill="#f0c040" stroke="#a07010" stroke-width="0.7"/></svg>
<div class="a" style="left:1359px;top:760px;width:1px;height:12px;background:#999"></div>
<svg class="a" style="left:1364px;top:759.5px" width="13" height="13" viewBox="0 0 13 13"><circle cx="6.5" cy="6.5" r="5.6" fill="#fff" stroke="#3a6ab0" stroke-width="1"/><path d="M3.5 9.5L9.5 3.5" stroke="#e0a020" stroke-width="1.6"/></svg>
</body></html>
